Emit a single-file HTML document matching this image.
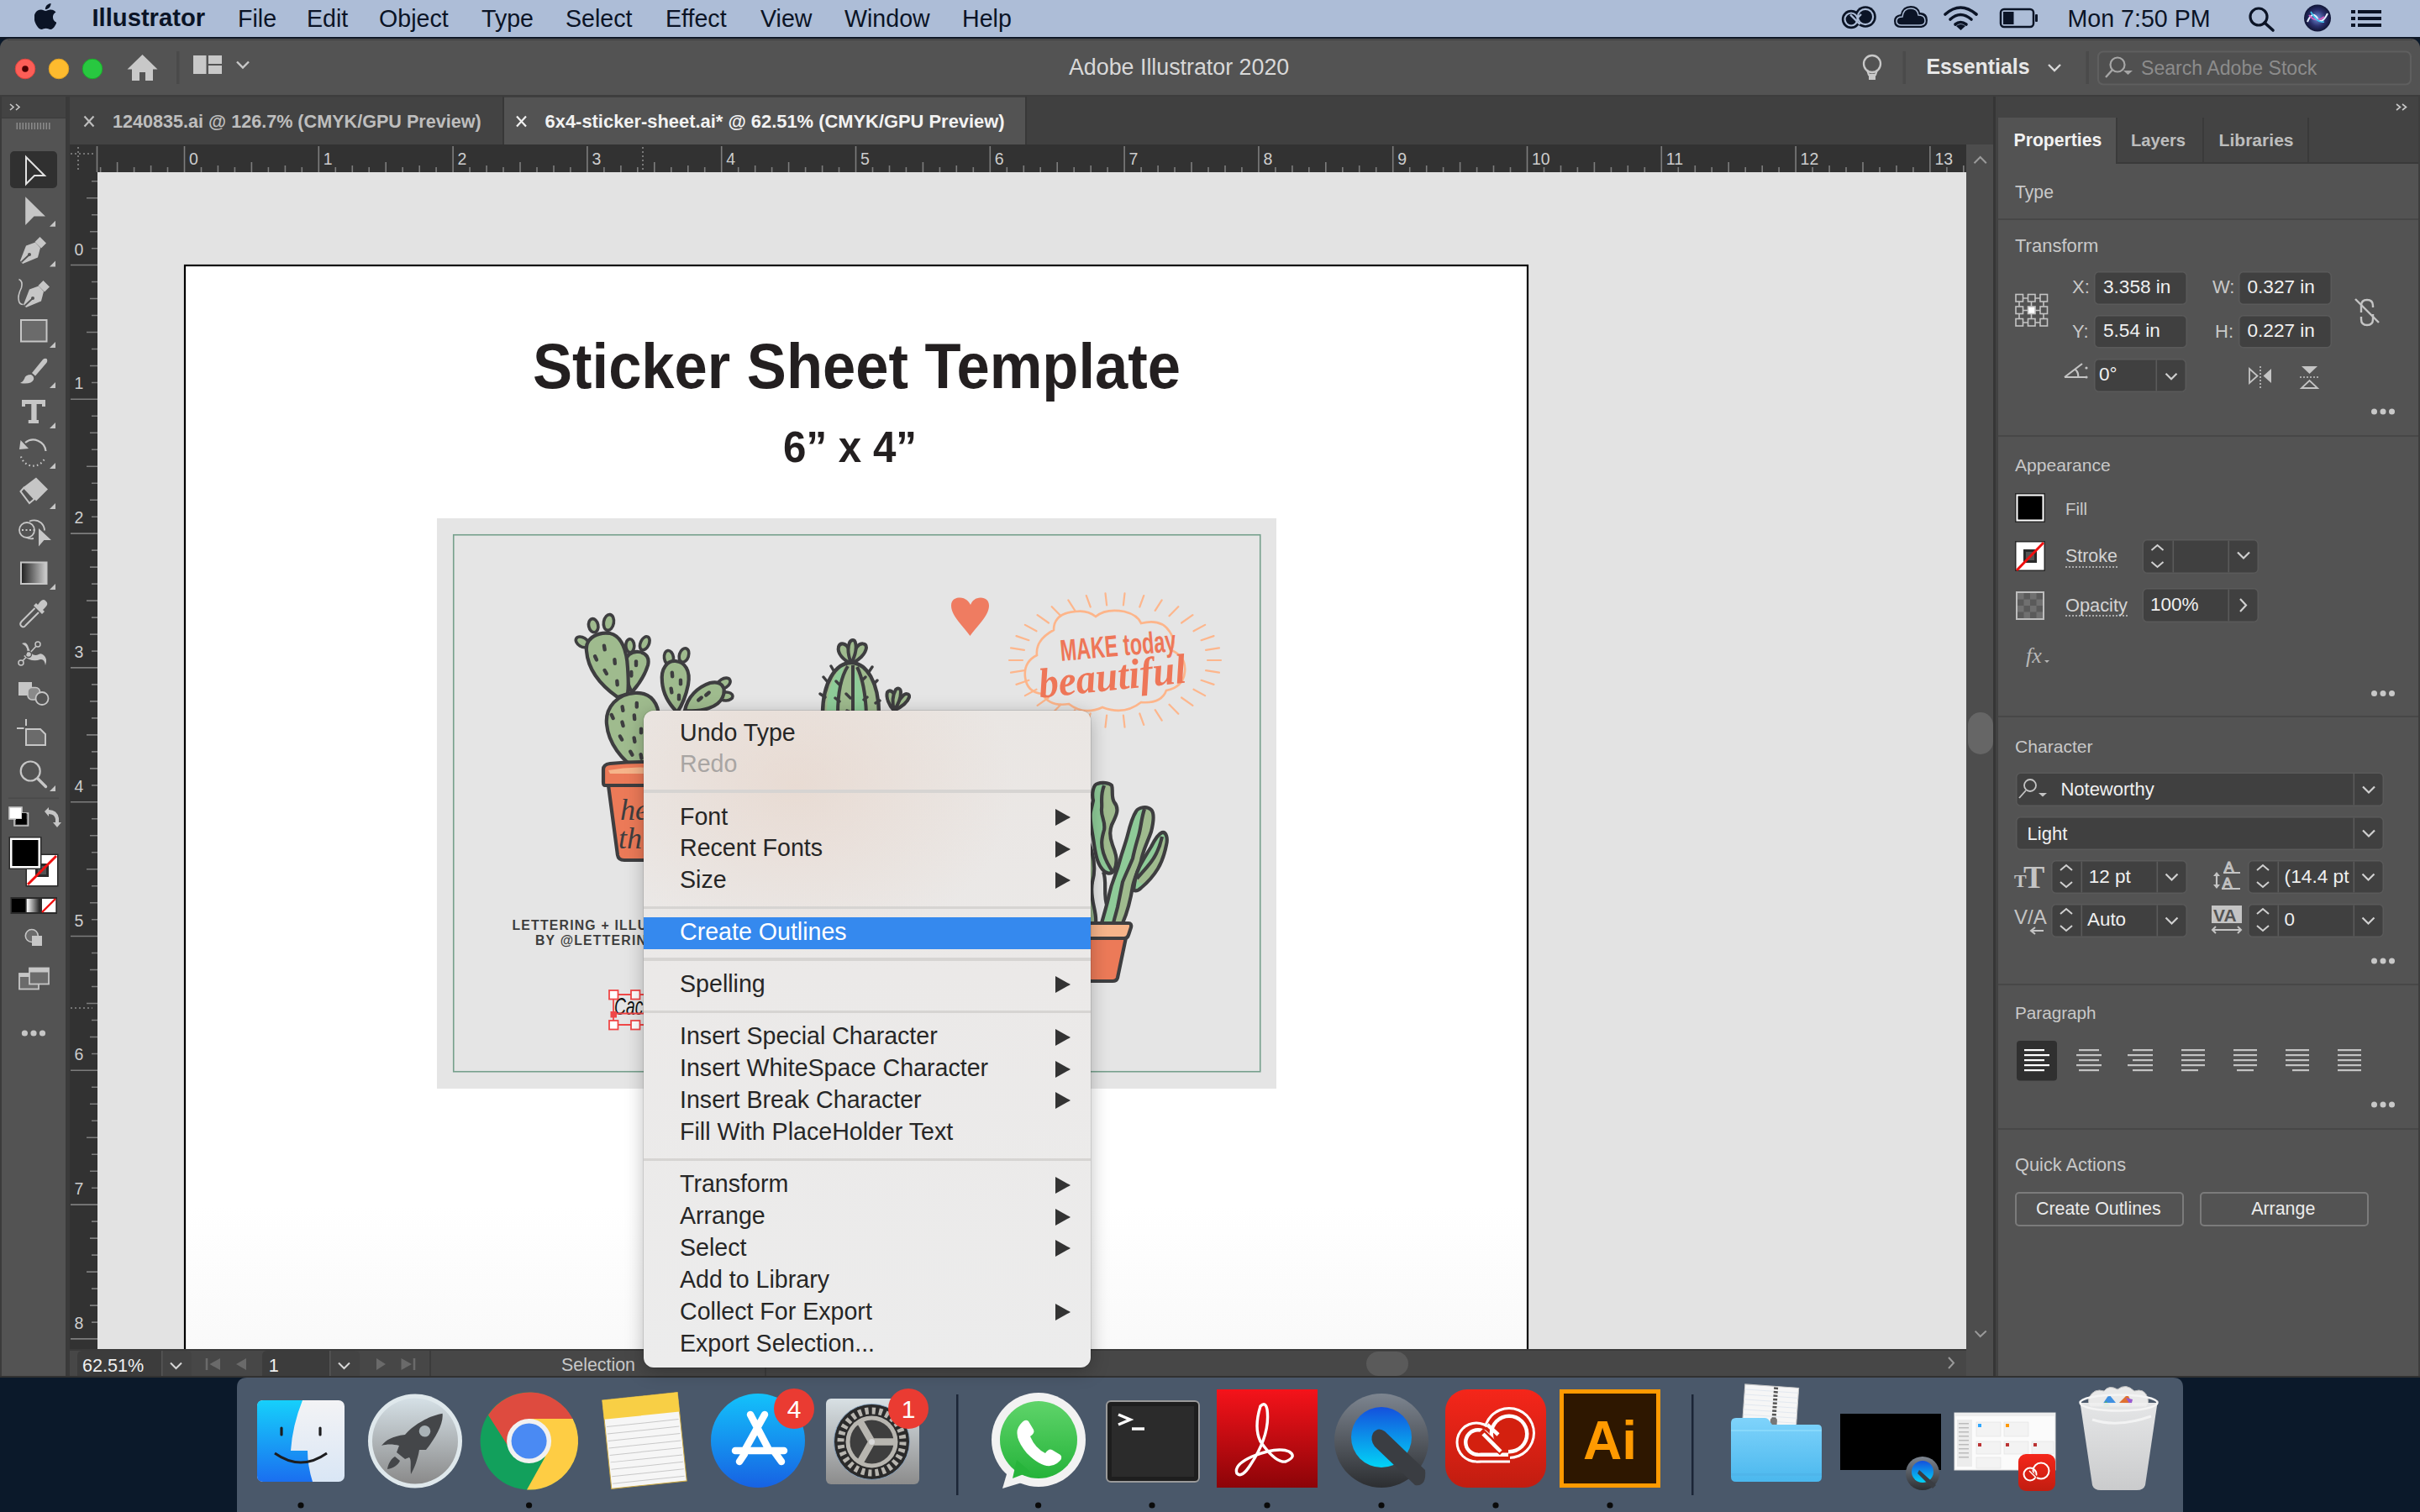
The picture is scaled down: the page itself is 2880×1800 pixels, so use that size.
<!DOCTYPE html>
<html><head><meta charset="utf-8"><title>Illustrator</title>
<style>*{margin:0;padding:0;box-sizing:border-box}
html,body{width:2880px;height:1800px;overflow:hidden}
body{position:relative;background:#0b192a;font-family:"Liberation Sans",sans-serif}
.a{position:absolute}
.t{position:absolute;white-space:nowrap;line-height:1}
</style></head>
<body>
<div class="a" style="left:0px;top:0px;width:2880px;height:45px;background:#adbdd7;"></div>
<div class="a" style="left:0px;top:44px;width:2880px;height:2.5px;background:#0e1726;"></div>
<svg class="a" style="left:41px;top:4px" width="26" height="31" viewBox="2.5 0 19 24" preserveAspectRatio="none"><path fill="#0b1426" d="M12.152 6.896c-.948 0-2.415-1.078-3.96-1.04-2.04.027-3.91 1.183-4.961 3.014-2.117 3.675-.546 9.103 1.519 12.09 1.013 1.454 2.208 3.09 3.792 3.039 1.52-.065 2.09-.987 3.935-.987 1.831 0 2.35.987 3.96.948 1.637-.026 2.676-1.48 3.676-2.948 1.156-1.688 1.636-3.325 1.662-3.415-.039-.013-3.182-1.221-3.22-4.857-.026-3.04 2.48-4.494 2.597-4.559-1.429-2.09-3.623-2.324-4.39-2.376-2-.156-3.675 1.09-4.61 1.09zM15.53 3.83c.843-1.012 1.4-2.427 1.245-3.83-1.207.052-2.662.805-3.532 1.818-.78.896-1.454 2.338-1.273 3.714 1.338.104 2.715-.688 3.559-1.701"/></svg>
<div class="t" style="left:109.5px;top:7.18px;font-size:29.2px;color:#0b1426;font-weight:bold;">Illustrator</div>
<div class="t" style="left:283px;top:7.69px;font-size:28.6px;color:#0b1426;">File</div>
<div class="t" style="left:365px;top:7.69px;font-size:28.6px;color:#0b1426;">Edit</div>
<div class="t" style="left:451px;top:7.69px;font-size:28.6px;color:#0b1426;">Object</div>
<div class="t" style="left:573px;top:7.69px;font-size:28.6px;color:#0b1426;">Type</div>
<div class="t" style="left:673px;top:7.69px;font-size:28.6px;color:#0b1426;">Select</div>
<div class="t" style="left:792px;top:7.69px;font-size:28.6px;color:#0b1426;">Effect</div>
<div class="t" style="left:905px;top:7.69px;font-size:28.6px;color:#0b1426;">View</div>
<div class="t" style="left:1005px;top:7.69px;font-size:28.6px;color:#0b1426;">Window</div>
<div class="t" style="left:1145px;top:7.69px;font-size:28.6px;color:#0b1426;">Help</div>
<div class="t" style="left:2460.5px;top:7.69px;font-size:28.6px;color:#0b1426;">Mon 7:50 PM</div>
<svg class="a" style="left:0;top:0" width="2880" height="45" viewBox="0 0 2880 45">
<g fill="#0b1426"><circle cx="2203" cy="23" r="11.2"/><circle cx="2220" cy="20" r="12.8"/></g>
<g fill="#adbdd7"><circle cx="2203" cy="23" r="8.6"/><circle cx="2220" cy="20" r="10.2"/></g>
<g fill="#0b1426"><circle cx="2203" cy="23" r="6.4"/><circle cx="2220" cy="20" r="8"/></g>
<path d="M2202 17.5 L2213.5 29" stroke="#adbdd7" stroke-width="2.4"/><path d="M2211 21 L2215 17" stroke="#adbdd7" stroke-width="2.2"/>
<path fill="#0b1426" d="M2262 33 q-8 0 -8 -8 q0 -7 8 -8 q2 -10 12 -10 q9 0 11 8 q9 0 9 9 q0 9 -9 9z"/>
<path fill="none" stroke="#adbdd7" stroke-width="1.5" d="M2263 30 q-6 0 -6 -5 q0 -5 7 -5 q1 -10 10 -10 q8 0 9 8 q8 0 8 7 q0 5 -7 5z"/>
<g fill="none" stroke="#0b1426" stroke-width="3.6" stroke-linecap="round">
<path d="M2315 17 q18 -16 37 0"/><path d="M2321 23 q12 -11 25 0"/><path d="M2327 29 q6 -5 13 0"/>
</g>
<path fill="#0b1426" d="M2328 31 l5.5 5 l5.5 -5 q-5.5 -4 -11 0z"/>
<rect x="2381" y="11" width="39" height="21" rx="4" fill="none" stroke="#0b1426" stroke-width="2.5"/>
<rect x="2384" y="14" width="12.5" height="15" fill="#0b1426"/>
<rect x="2422" y="17" width="3" height="9" rx="1" fill="#0b1426"/>
<circle cx="2688" cy="20" r="10" fill="none" stroke="#0b1426" stroke-width="3.2"/>
<path d="M2695 27 l10 9" stroke="#0b1426" stroke-width="3.6" stroke-linecap="round"/>
<defs><radialGradient id="siri" cx="50%" cy="50%" r="50%"><stop offset="0" stop-color="#6b8bd6"/><stop offset="0.6" stop-color="#2a2f6b"/><stop offset="1" stop-color="#101535"/></radialGradient></defs>
<circle cx="2758" cy="21.5" r="16" fill="url(#siri)"/>
<path d="M2746 26 q6 -14 12 -4 q5 8 12 -6" stroke="#e6f0ff" stroke-width="2" fill="none"/>
<path d="M2748 18 q8 10 18 2" stroke="#d060c0" stroke-width="2" fill="none"/>
<path d="M2750 14 q8 14 16 12" stroke="#40c8f0" stroke-width="1.6" fill="none"/>
<g fill="#0b1426"><rect x="2798" y="12" width="5" height="4"/><rect x="2806" y="12" width="28" height="4"/>
<rect x="2798" y="20" width="5" height="4"/><rect x="2806" y="20" width="28" height="4"/>
<rect x="2798" y="28" width="5" height="4"/><rect x="2806" y="28" width="28" height="4"/></g>
</svg>
<div class="a" style="left:0;top:46px;width:2880px;height:1593px;background:#535353;border-radius:11px 11px 0 0"></div>
<svg class="a" style="left:0;top:46px" width="2880" height="68" viewBox="0 46 2880 68">
<circle cx="30" cy="82" r="11.8" fill="#fd5e57" stroke="#e0443e" stroke-width="1"/>
<circle cx="30" cy="82" r="3.8" fill="#4d0000"/>
<circle cx="70" cy="82" r="11.8" fill="#febb2e" stroke="#dfa023" stroke-width="1"/>
<circle cx="110" cy="82" r="11.8" fill="#28c840" stroke="#1aab29" stroke-width="1"/>
<path fill="#c8c8c8" d="M151.5 82.5 L169.5 65 L187.5 82.5 L182 82.5 L182 96 L173 96 L173 86 L166 86 L166 96 L157 96 L157 82.5z"/>
<rect x="210" y="61" width="3.5" height="39" fill="#4a4a4a"/>
<rect x="230" y="66" width="15.5" height="22" fill="#c8c8c8"/>
<rect x="248" y="66" width="16" height="10" fill="#c8c8c8"/>
<rect x="248" y="78" width="16" height="10" fill="#c8c8c8"/>
<path d="M282 73.5 l7 7 l7 -7" fill="none" stroke="#c8c8c8" stroke-width="2.4"/>
<circle cx="2228" cy="76" r="10" fill="none" stroke="#c8c8c8" stroke-width="2.3"/>
<path d="M2222 83 l2 6 h8 l2 -6" fill="none" stroke="#c8c8c8" stroke-width="2.3"/>
<rect x="2224" y="89" width="8" height="6" fill="#c8c8c8"/>
<rect x="2264.5" y="61" width="3.5" height="39" fill="#4a4a4a"/>
<path d="M2438 77 l7 7 l7 -7" fill="none" stroke="#d8d8d8" stroke-width="2.4"/>
<rect x="2482.5" y="61" width="3.5" height="39" fill="#4a4a4a"/>
<rect x="2497" y="61.5" width="372" height="39" rx="6" fill="#505050" stroke="#5f5f5f" stroke-width="2.2"/>
<circle cx="2520" cy="77" r="8.5" fill="none" stroke="#a6a6a6" stroke-width="2.2"/>
<path d="M2514 83 l-8 9" stroke="#a6a6a6" stroke-width="2.4"/>
<path d="M2527 84 h11 l-5.5 5z" fill="#a6a6a6"/>
</svg>
<div class="a" style="left:9px;top:46.5px;width:2862px;height:1.5px;background:#3e3e3e;"></div>
<div class="t" style="left:1272px;top:67.02px;font-size:26.8px;color:#d8d8d8;">Adobe Illustrator 2020</div>
<div class="t" style="left:2292.4px;top:66.63px;font-size:24.9px;color:#e8e8e8;font-weight:bold;">Essentials</div>
<div class="t" style="left:2548px;top:69.66px;font-size:23.1px;color:#8c8c8c;">Search Adobe Stock</div>
<div class="a" style="left:0px;top:113px;width:2880px;height:2px;background:#3d3d3d;"></div>
<div class="a" style="left:0px;top:115px;width:80px;height:25px;background:#434343;"></div>
<div class="a" style="left:0px;top:140px;width:80px;height:1px;background:#3a3a3a;"></div>
<svg class="a" style="left:0;top:115px" width="80" height="50" viewBox="0 115 80 50"><path d="M12 124 l4 3.5 l-4 3.5 M19 124 l4 3.5 l-4 3.5" fill="none" stroke="#c8c8c8" stroke-width="1.6"/><rect x="19.5" y="146" width="1.6" height="8" fill="#8a8a8a"/><rect x="23.0" y="146" width="1.6" height="8" fill="#8a8a8a"/><rect x="26.5" y="146" width="1.6" height="8" fill="#8a8a8a"/><rect x="30.0" y="146" width="1.6" height="8" fill="#8a8a8a"/><rect x="33.5" y="146" width="1.6" height="8" fill="#8a8a8a"/><rect x="37.0" y="146" width="1.6" height="8" fill="#8a8a8a"/><rect x="40.5" y="146" width="1.6" height="8" fill="#8a8a8a"/><rect x="44.0" y="146" width="1.6" height="8" fill="#8a8a8a"/><rect x="47.5" y="146" width="1.6" height="8" fill="#8a8a8a"/><rect x="51.0" y="146" width="1.6" height="8" fill="#8a8a8a"/><rect x="54.5" y="146" width="1.6" height="8" fill="#8a8a8a"/><rect x="58.0" y="146" width="1.6" height="8" fill="#8a8a8a"/></svg>
<div class="a" style="left:0px;top:115px;width:2px;height:1524px;background:#3b3b3b;"></div>
<div class="a" style="left:78px;top:115px;width:5px;height:1524px;background:#3a3a3a;"></div>
<div class="a" style="left:83px;top:115px;width:2290px;height:57px;background:#404040;"></div>
<div class="a" style="left:83px;top:116px;width:515px;height:56px;background:#434343;"></div>
<div class="a" style="left:598px;top:115px;width:2px;height:57px;background:#383838;"></div>
<div class="a" style="left:600px;top:116px;width:620px;height:56px;background:#535353;"></div>
<div class="a" style="left:1220px;top:115px;width:2px;height:57px;background:#383838;"></div>
<svg class="a" style="left:83px;top:115px" width="600" height="57" viewBox="83 115 600 57">
<path d="M100.5 138.5 l11 12 M111.5 138.5 l-11 12" stroke="#bdbdbd" stroke-width="2.2"/>
<path d="M615 138.5 l11 12 M626 138.5 l-11 12" stroke="#f0f0f0" stroke-width="2.2"/>
</svg>
<div class="t" style="left:134px;top:133.94px;font-size:21.6px;color:#bebebe;font-weight:bold;">1240835.ai @ 126.7% (CMYK/GPU Preview)</div>
<div class="t" style="left:648.6px;top:133.69px;font-size:21.9px;color:#f2f2f2;font-weight:bold;">6x4-sticker-sheet.ai* @ 62.51% (CMYK/GPU Preview)</div>
<div class="a" style="left:83px;top:172px;width:2257px;height:33px;background:#323232;"></div>
<div class="a" style="left:83px;top:205px;width:33px;height:1401px;background:#323232;"></div>
<svg class="a" style="left:0;top:0" width="2340" height="1606" viewBox="0 0 2340 1606">
<path d="M119.6 199V205M139.6 193V205M159.6 199V205M179.6 197V205M199.5 199V205M219.5 174V205M239.5 199V205M259.4 197V205M279.4 199V205M299.4 193V205M319.4 199V205M339.4 197V205M359.3 199V205M379.3 174V205M399.3 199V205M419.3 197V205M439.2 199V205M459.2 193V205M479.2 199V205M499.2 197V205M519.1 199V205M539.1 174V205M559.1 199V205M579.1 197V205M599.0 199V205M619.0 193V205M639.0 199V205M659.0 197V205M678.9 199V205M698.9 174V205M718.9 199V205M738.9 197V205M758.8 199V205M778.8 193V205M798.8 199V205M818.8 197V205M838.7 199V205M858.7 174V205M878.7 199V205M898.7 197V205M918.6 199V205M938.6 193V205M958.6 199V205M978.6 197V205M998.5 199V205M1018.5 174V205M1038.5 199V205M1058.5 197V205M1078.4 199V205M1098.4 193V205M1118.4 199V205M1138.3 197V205M1158.3 199V205M1178.3 174V205M1198.3 199V205M1218.3 197V205M1238.2 199V205M1258.2 193V205M1278.2 199V205M1298.2 197V205M1318.1 199V205M1338.1 174V205M1358.1 199V205M1378.1 197V205M1398.0 199V205M1418.0 193V205M1438.0 199V205M1458.0 197V205M1477.9 199V205M1497.9 174V205M1517.9 199V205M1537.9 197V205M1557.8 199V205M1577.8 193V205M1597.8 199V205M1617.7 197V205M1637.7 199V205M1657.7 174V205M1677.7 199V205M1697.7 197V205M1717.6 199V205M1737.6 193V205M1757.6 199V205M1777.5 197V205M1797.5 199V205M1817.5 174V205M1837.5 199V205M1857.5 197V205M1877.4 199V205M1897.4 193V205M1917.4 199V205M1937.3 197V205M1957.3 199V205M1977.3 174V205M1997.3 199V205M2017.3 197V205M2037.2 199V205M2057.2 193V205M2077.2 199V205M2097.2 197V205M2117.1 199V205M2137.1 174V205M2157.1 199V205M2177.1 197V205M2197.0 199V205M2217.0 193V205M2237.0 199V205M2257.0 197V205M2276.9 199V205M2296.9 174V205M2316.9 199V205M2336.8 197V205M115.5 174V205" stroke="#7d7d7d" stroke-width="1.6"/>
<path d="M109 215.7H116M103 235.7H116M109 255.7H116M107 275.7H116M109 295.7H116M84 315.5H116M109 335.5H116M107 355.5H116M109 375.5H116M103 395.5H116M109 415.5H116M107 435.5H116M109 455.5H116M84 475.3H116M109 495.3H116M107 515.3H116M109 535.3H116M103 555.3H116M109 575.3H116M107 595.3H116M109 615.3H116M84 635.1H116M109 655.1H116M107 675.1H116M109 695.1H116M103 715.1H116M109 735.1H116M107 755.1H116M109 775.1H116M84 794.9000000000001H116M109 814.9000000000001H116M107 834.9000000000001H116M109 854.9000000000001H116M103 874.9000000000001H116M109 894.9000000000001H116M107 914.9000000000001H116M109 934.9000000000001H116M84 954.7H116M109 974.7H116M107 994.7H116M109 1014.7H116M103 1034.7H116M109 1054.7H116M107 1074.7H116M109 1094.7H116M84 1114.5H116M109 1134.5H116M107 1154.5H116M109 1174.5H116M103 1194.5H116M109 1214.5H116M107 1234.5H116M109 1254.5H116M84 1274.3000000000002H116M109 1294.3000000000002H116M107 1314.3000000000002H116M109 1334.3000000000002H116M103 1354.3000000000002H116M109 1374.3000000000002H116M107 1394.3000000000002H116M109 1414.3000000000002H116M84 1434.1000000000001H116M109 1454.1000000000001H116M107 1474.1000000000001H116M109 1494.1000000000001H116M103 1514.1000000000001H116M109 1534.1000000000001H116M107 1554.1000000000001H116M109 1574.1000000000001H116M84 1593.9H116" stroke="#7d7d7d" stroke-width="1.6"/>
<g font-family="Liberation Sans"><text x="225.0" y="196" font-size="19.5" fill="#cdcdcd">0</text><text x="384.8" y="196" font-size="19.5" fill="#cdcdcd">1</text><text x="544.6" y="196" font-size="19.5" fill="#cdcdcd">2</text><text x="704.4" y="196" font-size="19.5" fill="#cdcdcd">3</text><text x="864.2" y="196" font-size="19.5" fill="#cdcdcd">4</text><text x="1024.0" y="196" font-size="19.5" fill="#cdcdcd">5</text><text x="1183.8" y="196" font-size="19.5" fill="#cdcdcd">6</text><text x="1343.6" y="196" font-size="19.5" fill="#cdcdcd">7</text><text x="1503.4" y="196" font-size="19.5" fill="#cdcdcd">8</text><text x="1663.2" y="196" font-size="19.5" fill="#cdcdcd">9</text><text x="1823.0" y="196" font-size="19.5" fill="#cdcdcd">10</text><text x="1982.8" y="196" font-size="19.5" fill="#cdcdcd">11</text><text x="2142.6" y="196" font-size="19.5" fill="#cdcdcd">12</text><text x="2302.4" y="196" font-size="19.5" fill="#cdcdcd">13</text><text x="88.5" y="303.5" font-size="19.5" fill="#cdcdcd">0</text><text x="88.5" y="463.3" font-size="19.5" fill="#cdcdcd">1</text><text x="88.5" y="623.1" font-size="19.5" fill="#cdcdcd">2</text><text x="88.5" y="782.9000000000001" font-size="19.5" fill="#cdcdcd">3</text><text x="88.5" y="942.7" font-size="19.5" fill="#cdcdcd">4</text><text x="88.5" y="1102.5" font-size="19.5" fill="#cdcdcd">5</text><text x="88.5" y="1262.3000000000002" font-size="19.5" fill="#cdcdcd">6</text><text x="88.5" y="1422.1000000000001" font-size="19.5" fill="#cdcdcd">7</text><text x="88.5" y="1581.9" font-size="19.5" fill="#cdcdcd">8</text></g>
<path d="M93 175V205 M84 183H114" stroke="#8a8a8a" stroke-width="1.6" stroke-dasharray="2 3"/>
<path d="M765 175V205" stroke="#8a8a8a" stroke-width="1.6" stroke-dasharray="2 3"/>
<path d="M84 1200H110" stroke="#8a8a8a" stroke-width="1.6" stroke-dasharray="2 3"/>
</svg>
<svg class="a" style="left:0;top:140px" width="80" height="1500" viewBox="0 140 80 1500">
<rect x="12" y="180" width="56" height="44" rx="5" fill="#303030"/>
<path d="M31 187 L53 209 L41 209 L31 219z" fill="none" stroke="#e2e2e2" stroke-width="2" stroke-linejoin="miter"/>
<path d="M30.2 234.3 L54 257.6 L40.5 257.6 L30.2 268z" fill="#c6c6c6"/><path d="M59 269.7 L66 262.7 L66 269.7z" fill="#c6c6c6"/>
<g fill="#c6c6c6"><path d="M24 310.5 L31 292.5 L42 288.5 L48 295 L45 306.5 L27 314z"/><path d="M41.5 288 L47.5 282 L55 289.5 L49 295.5z"/></g><path d="M25.5 312 L35 303" stroke="#535353" stroke-width="1.8"/><circle cx="35" cy="303" r="2" fill="#535353"/><path d="M59 317.6 L66 310.6 L66 317.6z" fill="#c6c6c6"/>
<g fill="#c6c6c6"><path d="M28 362.5 L35 344.5 L46 340.5 L52 347 L49 358.5 L31 366z"/><path d="M45.5 340 L51.5 334 L59 341.5 L53 347.5z"/></g><path d="M29.5 364 L39 355" stroke="#535353" stroke-width="1.8"/><circle cx="39" cy="355" r="2" fill="#535353"/><path d="M22.5 332.5 q5 2 3 10 q-5 10 -3 16 q1 4 5 4" fill="none" stroke="#c6c6c6" stroke-width="1.6"/>
<rect x="25" y="381" width="30.5" height="25.5" fill="#6b6b6b" stroke="#c6c6c6" stroke-width="2"/><path d="M59 414 L66 407 L66 414z" fill="#c6c6c6"/>
<path d="M55.5 427 q2 3 -1 6 L42 447.5 L38 444 L51 428 q2 -2 4.5 -1z" fill="#c6c6c6"/><path d="M37 446 q4 2 3 6 q-3 6 -16 4 q4 -2 5 -5 q1 -5 8 -5z" fill="#c6c6c6"/><path d="M59 462 L66 455 L66 462z" fill="#c6c6c6"/>
<path d="M26 476 H54 V484 H50 V481 H43.6 V500 H46 V504 H33.8 V500 H37.3 V481 H30 V484 H26z" fill="#c6c6c6"/><path d="M59 510 L66 503 L66 510z" fill="#c6c6c6"/>
<path d="M54.5 537 A15 15 0 0 0 30 527" fill="none" stroke="#c6c6c6" stroke-width="2.2"/><path d="M24.5 524 L34 534 L23 535z" fill="#c6c6c6"/><path d="M25 543.5 A15 15 0 0 0 53.5 545" fill="none" stroke="#c6c6c6" stroke-width="2.2" stroke-dasharray="1.6 3.2"/><path d="M59 558 L66 551 L66 558z" fill="#c6c6c6"/>
<path d="M28.5 579.5 L43 568.5 L57 582.5 L43 596.5z" fill="#c6c6c6"/><path d="M28.5 580.5 L24.5 585 L35 599 L41 594z" fill="none" stroke="#c6c6c6" stroke-width="2"/><path d="M59 606 L66 599 L66 606z" fill="#c6c6c6"/>
<circle cx="32" cy="631" r="9" fill="none" stroke="#c6c6c6" stroke-width="1.8"/><path d="M35 620.5 q8 -3 14 2 q4 4 4 9" fill="none" stroke="#c6c6c6" stroke-width="1.8"/><path d="M40 641 q-5 1 -8 -1" fill="none" stroke="#c6c6c6" stroke-width="1.8"/><path d="M26 631 H44" stroke="#c6c6c6" stroke-width="1.8" stroke-dasharray="2 2.5"/><path d="M46 629 L61 643 L52.4 643 L46 650.5z" fill="#c6c6c6"/>
<defs><linearGradient id="gr" x1="0" x2="1"><stop offset="0" stop-color="#1e1e1e"/><stop offset="1" stop-color="#d0d0d0"/></linearGradient><linearGradient id="gr2" x1="0" x2="1"><stop offset="0" stop-color="#ffffff"/><stop offset="1" stop-color="#222"/></linearGradient></defs>
<rect x="25" y="669.5" width="30.5" height="25.5" fill="url(#gr)" stroke="#c6c6c6" stroke-width="2"/><path d="M59 702 L66 695 L66 702z" fill="#c6c6c6"/>
<path d="M48 716 q4 -4 7 0 q3 3 -1 7 l-3 3 l2 2 l-3 3 l-10 -10 l3 -3 l2 2z" fill="#c6c6c6"/><path d="M41.5 724 L26 739.5 q-3 3 -1 5.5 q3 3 5.5 -0.5 L46 729" fill="none" stroke="#c6c6c6" stroke-width="2"/>
<path d="M26 766 q6 -3 8 5 q4 12 12 8 q3 -2 6 1 q5 4 2 12 q-1 -8 -6 -7 q-10 4 -20 -4 q6 -2 4 -9 q-2 -4 -6 -6z" fill="#c6c6c6"/><path d="M25 789 L45 767" stroke="#c6c6c6" stroke-width="1.6"/><circle cx="25" cy="789" r="3" fill="#535353" stroke="#c6c6c6" stroke-width="1.5"/><circle cx="45" cy="767" r="3" fill="#535353" stroke="#c6c6c6" stroke-width="1.5"/><circle cx="34" cy="779" r="3.5" fill="none" stroke="#535353" stroke-width="1.4"/>
<rect x="22" y="812" width="16" height="16" fill="#c6c6c6"/><rect x="33" y="818.5" width="14.5" height="14.5" rx="5" fill="#8a8a8a" stroke="#c6c6c6" stroke-width="1.6"/><circle cx="50" cy="831.5" r="7.5" fill="#535353" stroke="#c6c6c6" stroke-width="1.8"/>
<path d="M20 867 H28.5 M31 856 V864" stroke="#c6c6c6" stroke-width="2"/><path d="M31 868 H48 L54 874 V887 H31z" fill="#6b6b6b" stroke="#c6c6c6" stroke-width="2"/>
<circle cx="36.2" cy="918" r="11.5" fill="none" stroke="#c6c6c6" stroke-width="2.2"/><path d="M45 927 L54.5 936.5" stroke="#c6c6c6" stroke-width="3.4" stroke-linecap="round"/><path d="M59 942 L66 935 L66 942z" fill="#c6c6c6"/>
<rect x="10" y="949.5" width="60" height="1.2" fill="#484848"/>
<rect x="11" y="961" width="15" height="14" fill="#fff" stroke="#c6c6c6" stroke-width="1.6"/><path d="M26 968 H33.5 V983 H17 V975" fill="none" stroke="#c6c6c6" stroke-width="1.6"/><rect x="19" y="975" width="12.5" height="6.5" fill="#000"/><rect x="26" y="968" width="5.5" height="13" fill="#000"/>
<path d="M53 966 L58 961 L58 964 q10 0 12 10 L70 979 L73 979 L68 985 L63 979 L66 979 L66 975 q-1 -6 -8 -6 L58 972z" fill="#c6c6c6"/>
<rect x="30.5" y="1016.5" width="39" height="39" fill="#2b2b2b"/><rect x="32" y="1018" width="36" height="36" fill="#fff"/><rect x="42" y="1028" width="16" height="16" fill="#2b2b2b"/><rect x="45" y="1031" width="10" height="10" fill="#535353"/><path d="M33 1053 L67 1019" stroke="#f01010" stroke-width="3"/>
<rect x="10.5" y="996" width="39" height="39" fill="#2b2b2b"/><rect x="12" y="997.5" width="36" height="36" fill="#fff"/><rect x="14.5" y="1000" width="31" height="31" fill="#000"/>
<rect x="12.5" y="1068" width="55.5" height="20" fill="#2b2b2b"/><rect x="14" y="1070" width="16" height="16" fill="#000"/><rect x="31.7" y="1070" width="15.6" height="16" fill="url(#gr2)"/><rect x="50" y="1070" width="16.3" height="16" fill="#fff"/><path d="M50 1086 L66 1070" stroke="#f01010" stroke-width="2.4"/>
<circle cx="37.8" cy="1114" r="7.5" fill="#6b6b6b" stroke="#c6c6c6" stroke-width="1.6"/><rect x="38" y="1114" width="12" height="12" fill="#c6c6c6"/>
<rect x="23" y="1159" width="23" height="18.5" fill="#6b6b6b" stroke="#c6c6c6" stroke-width="1.8"/><rect x="23" y="1159" width="23" height="4" fill="#c6c6c6"/><rect x="35" y="1152.5" width="23" height="19" fill="#6b6b6b" stroke="#c6c6c6" stroke-width="1.8"/><rect x="35" y="1152.5" width="23" height="5" fill="#c6c6c6"/>
<g fill="#c6c6c6"><circle cx="29.4" cy="1230" r="3.6"/><circle cx="40" cy="1230" r="3.6"/><circle cx="50.5" cy="1230" r="3.6"/></g>
</svg>
<div class="a" style="left:116px;top:205px;width:2224px;height:1401px;background:#e3e3e3;"></div>
<svg class="a" style="left:116px;top:205px" width="2224" height="1401" viewBox="116 205 2224 1401" font-family="Liberation Sans">
<defs><linearGradient id="abg" x1="0" y1="0" x2="0" y2="1"><stop offset="0" stop-color="#fff"/><stop offset="0.8" stop-color="#fff"/><stop offset="0.93" stop-color="#f9f9f9"/><stop offset="1" stop-color="#f7f7f7"/></linearGradient></defs>
<rect x="220" y="316" width="1598" height="1400" fill="url(#abg)" stroke="#000" stroke-width="2.2"/>
<text x="634" y="462" font-size="76" font-weight="bold" fill="#231f20" textLength="771" lengthAdjust="spacingAndGlyphs">Sticker Sheet Template</text>
<text x="932" y="550" font-size="51" font-weight="bold" fill="#231f20" textLength="159" lengthAdjust="spacingAndGlyphs">6” x 4”</text>
<rect x="520" y="617" width="999" height="679" fill="#e5e5e5"/>
<rect x="539.75" y="636.75" width="960" height="639" fill="none" stroke="#76a08c" stroke-width="1.6"/>
<path fill="#ef7c61" d="M1154.5 757 C1146 745 1132 733 1132 721 C1132 713 1138 711.5 1142.5 711.5 C1149 711.5 1153 716 1155 720 C1157 715 1161 711.5 1167 711.5 C1173 711.5 1177 715 1177 721 C1177 733 1163 745 1154.5 757z"/>
<path d="M1437.0 786.0L1453.0 786.0M1435.1 798.1L1450.9 800.7M1429.6 809.8L1444.5 814.9M1420.5 820.7L1434.1 828.1M1406.1 830.5L1419.4 839.9M1391.5 838.7L1402.3 849.8M1374.7 845.1L1382.7 857.6M1356.3 849.5L1361.2 862.9M1336.9 851.7L1338.5 865.7M1317.1 851.7L1315.5 865.7M1297.7 849.5L1292.8 862.9M1279.3 845.1L1271.3 857.6M1262.5 838.7L1251.7 849.8M1247.9 830.5L1234.6 839.9M1233.5 820.7L1219.9 828.1M1224.4 809.8L1209.5 814.9M1218.9 798.1L1203.1 800.7M1217.0 786.0L1201.0 786.0M1218.9 773.9L1203.1 771.3M1224.4 762.2L1209.5 757.1M1233.5 751.3L1219.9 743.9M1247.9 741.5L1234.6 732.1M1262.5 733.3L1251.7 722.2M1279.3 726.9L1271.3 714.4M1297.7 722.5L1292.8 709.1M1317.1 720.3L1315.5 706.3M1336.9 720.3L1338.5 706.3M1356.3 722.5L1361.2 709.1M1374.7 726.9L1382.7 714.4M1391.5 733.3L1402.3 722.2M1406.1 741.5L1419.4 732.1M1420.5 751.3L1434.1 743.9M1429.6 762.2L1444.5 757.1M1435.1 773.9L1450.9 771.3" stroke="#fdb68c" stroke-width="2.2" stroke-linecap="round"/>
<path fill="none" stroke="#fdb58a" stroke-width="2.6" d="M1254 750 q0 -20 26 -22 q14 -2 24 6 q12 -10 34 -6 q16 4 20 14 q24 -6 34 10 q8 12 2 22 q18 8 16 26 q-2 18 -22 22 q-6 16 -30 14 q-20 16 -46 6 q-22 10 -40 -4 q-22 4 -32 -12 q-18 -2 -20 -20 q-2 -18 14 -26 q-2 -18 20 -30z"/>
<text x="1261" y="781" font-size="36" fill="#ee7658" font-weight="bold" textLength="138" lengthAdjust="spacingAndGlyphs" transform="rotate(-5 1330 765)">MAKE today</text>
<text x="1236" y="822" font-size="50" font-style="italic" font-weight="bold" fill="#ee7658" textLength="176" lengthAdjust="spacingAndGlyphs" font-family="Liberation Serif" transform="rotate(-6 1320 810)">beautiful</text>
<ellipse cx="706.2" cy="744.7" rx="5.6" ry="8.2" transform="rotate(-12 706.2 744.7)" fill="#9fbb8e" stroke="#3e3e40" stroke-width="3.6"/>
<ellipse cx="724.4" cy="741" rx="6" ry="9.5" transform="rotate(10 724.4 741)" fill="#9fbb8e" stroke="#3e3e40" stroke-width="3.6"/>
<ellipse cx="693" cy="764.4" rx="5.4" ry="8.4" transform="rotate(-58 693 764.4)" fill="#9fbb8e" stroke="#3e3e40" stroke-width="3.6"/>
<ellipse cx="749.8" cy="768.7" rx="5" ry="8" transform="rotate(-2 749.8 768.7)" fill="#9fbb8e" stroke="#3e3e40" stroke-width="3.6"/>
<ellipse cx="767.3" cy="765.8" rx="5" ry="8.5" transform="rotate(25 767.3 765.8)" fill="#9fbb8e" stroke="#3e3e40" stroke-width="3.6"/>
<ellipse cx="796" cy="783" rx="5.5" ry="8.5" transform="rotate(-8 796 783)" fill="#9fbb8e" stroke="#3e3e40" stroke-width="3.6"/>
<ellipse cx="814" cy="780" rx="5.5" ry="8.5" transform="rotate(18 814 780)" fill="#9fbb8e" stroke="#3e3e40" stroke-width="3.6"/>
<ellipse cx="861.3" cy="813.6" rx="5.5" ry="8.5" transform="rotate(58 861.3 813.6)" fill="#9fbb8e" stroke="#3e3e40" stroke-width="3.6"/>
<ellipse cx="864" cy="829" rx="5" ry="8" transform="rotate(88 864 829)" fill="#9fbb8e" stroke="#3e3e40" stroke-width="3.6"/>
<path d="M745 790 C744 780 752 775 760 776 C770 777 773 784 771 792 C768 802 760 815 752 824 C748 818 745 805 745 790 Z" fill="#9fbb8e" stroke="#3e3e40" stroke-width="4.2" stroke-linejoin="round"/>
<path d="M788 812 C786 795 795 786 804 787 C815 788 822 798 819 815 C816 830 810 842 806 848 C796 838 789 825 788 812 Z" fill="#9fbb8e" stroke="#3e3e40" stroke-width="4.2" stroke-linejoin="round"/>
<path d="M815 846 C818 830 830 818 845 813 C858 810 865 818 860 830 C855 842 835 848 815 846 Z" fill="#9fbb8e" stroke="#3e3e40" stroke-width="4.2" stroke-linejoin="round"/>
<path d="M698 775 C696 758 714 752 726 754 C740 757 746 775 747 795 C748 810 748 820 747 826 L735 830 C718 818 700 800 698 775 Z" fill="#9fbb8e" stroke="#3e3e40" stroke-width="4.2" stroke-linejoin="round"/>
<path d="M722 862 C720 842 735 826 756 825 C775 824 785 838 784 858 C782 880 772 905 760 918 C740 905 724 885 722 862 Z" fill="#9fbb8e" stroke="#3e3e40" stroke-width="4.2" stroke-linejoin="round"/>
<g fill="#3e3e40"><rect x="717.0999999999999" y="766.5" width="4.4" height="9" rx="2.2" transform="rotate(-10 719.3 771)"/><rect x="706.8" y="778.8" width="4.4" height="9" rx="2.2" transform="rotate(-25 709 783.3)"/><rect x="729.4" y="783.1" width="4.4" height="9" rx="2.2" transform="rotate(-5 731.6 787.6)"/><rect x="718.5" y="795.5" width="4.4" height="9" rx="2.2" transform="rotate(-30 720.7 800)"/><rect x="732.3" y="808.5" width="4.4" height="9" rx="2.2" transform="rotate(-5 734.5 813)"/><rect x="754.8" y="785.3" width="4.4" height="9" rx="2.2" transform="rotate(0 757 789.8)"/><rect x="749.0999999999999" y="797.7" width="4.4" height="9" rx="2.2" transform="rotate(0 751.3 802.2)"/><rect x="755.5999999999999" y="834.8" width="4.4" height="9" rx="2.2" transform="rotate(0 757.8 839.3)"/><rect x="738.8" y="839.1" width="4.4" height="9" rx="2.2" transform="rotate(-10 741 843.6)"/><rect x="726.5" y="848.5" width="4.4" height="9" rx="2.2" transform="rotate(-25 728.7 853)"/><rect x="738.8" y="857.3" width="4.4" height="9" rx="2.2" transform="rotate(-15 741 861.8)"/><rect x="752.8" y="849.3" width="4.4" height="9" rx="2.2" transform="rotate(-5 755 853.8)"/><rect x="760.8" y="865.5" width="4.4" height="9" rx="2.2" transform="rotate(0 763 870)"/><rect x="736.8" y="874.0" width="4.4" height="9" rx="2.2" transform="rotate(-30 739 878.5)"/><rect x="752.8" y="876.2" width="4.4" height="9" rx="2.2" transform="rotate(-10 755 880.7)"/><rect x="749.0999999999999" y="892.2" width="4.4" height="9" rx="2.2" transform="rotate(-30 751.3 896.7)"/><rect x="760.8" y="895.9" width="4.4" height="9" rx="2.2" transform="rotate(-10 763 900.4)"/><rect x="797.8" y="798.5" width="4.4" height="9" rx="2.2" transform="rotate(-5 800 803)"/><rect x="807.8" y="807.5" width="4.4" height="9" rx="2.2" transform="rotate(0 810 812)"/><rect x="796.8" y="817.5" width="4.4" height="9" rx="2.2" transform="rotate(-10 799 822)"/><rect x="805.8" y="825.5" width="4.4" height="9" rx="2.2" transform="rotate(0 808 830)"/><rect x="830.8" y="827.5" width="4.4" height="9" rx="2.2" transform="rotate(50 833 832)"/><rect x="839.8" y="821.5" width="4.4" height="9" rx="2.2" transform="rotate(50 842 826)"/></g>
<path d="M724 935 L735 1018 q1 6 8 6 L790 1024 L800 935z" fill="#ec7a58" stroke="#3e3e40" stroke-width="4.2"/>
<path d="M718 916 q0 -6 8 -7 q40 -4 76 0 V935 H720 q-2 0 -2 -4z" fill="#ec7a58" stroke="#3e3e40" stroke-width="4.2"/>
<path d="M724 917 q30 -6 60 -2 q-4 4 -8 6 H726z" fill="#f6b48a" stroke="none"/>
<text x="738" y="976" font-family="Liberation Serif" font-style="italic" font-size="36" fill="#3e3e40">he</text><text x="736" y="1010" font-family="Liberation Serif" font-style="italic" font-size="36" fill="#3e3e40">th</text>
<g fill="#9fbb8e" stroke="#3e3e40" stroke-width="4" stroke-linejoin="round"><path d="M1013 790 C1004 786 996 778 998 770 C1000 764 1007 766 1010 772 C1012 777 1013 784 1013 790z"/><path d="M1013 790 C1022 786 1030 779 1031 771 C1031 765 1024 765 1020 770 C1016 775 1014 783 1013 790z"/><path d="M1013 790 C1010 782 1008 772 1011 765 C1013 761 1017 761 1018 765 C1020 772 1017 782 1013 790z"/></g>
<path d="M979 850 C979 812 995 789 1013 789 C1031 789 1046 812 1046 850z" fill="#9fbb8e"/>
<path d="M984 850 C984 818 994 800 1004 793 C1000 808 997 826 997 850z" fill="#8ecb98"/><path d="M1015 850 L1015 792 C1023 806 1028 826 1029 850z" fill="#8ecb98"/>
<path d="M979 850 C979 812 995 789 1013 789 C1031 789 1046 812 1046 850" fill="none" stroke="#3e3e40" stroke-width="4.4"/>
<path d="M997 850 C997 822 1002 804 1009 793 M1015 792 V850 M1031 850 C1030 824 1026 806 1020 794" fill="none" stroke="#3e3e40" stroke-width="4"/>
<path d="M989 793 l4 7 M980 806 l5 6 M976 826 l6 4 M995 811 l4 4 M994 831 l5 4 M1007 826 l5 5 M1008 846 l5 2 M1038 794 l-4 6 M1044 810 l-4 4 M1047 834 l-5 3 M1030 806 l-4 4 M1032 830 l-4 3" stroke="#3e3e40" stroke-width="3.4" stroke-linecap="round"/>
<g fill="#9fbb8e" stroke="#3e3e40" stroke-width="4" stroke-linejoin="round"><path d="M1064 846 C1058 840 1054 830 1056 824 C1059 820 1064 824 1066 830 C1067 836 1066 842 1064 846z"/><path d="M1064 846 C1072 842 1080 836 1082 830 C1083 825 1077 825 1074 829 C1069 834 1066 840 1064 846z"/><path d="M1064 846 C1062 838 1062 828 1066 821 C1069 818 1072 820 1072 824 C1072 832 1068 840 1064 846z"/></g>
<path d="M1290 990 C1300 1010 1306 1030 1300 1050 C1296 1070 1306 1085 1304 1099 L1290 1099z" fill="#93b28a" stroke="#3e3e40" stroke-width="4.2" stroke-linejoin="round"/>
<path d="M1313 1038 C1318 1050 1312 1065 1318 1080 C1320 1090 1316 1095 1316 1099" fill="none" stroke="#3e3e40" stroke-width="4.2" stroke-linejoin="round"/>
<path d="M1301 953 C1299 945 1301 934 1306 933 C1312 931 1320 932 1323 935 C1325 940 1322 948 1326 955 C1333 963 1328 972 1323 982 C1320 990 1321 998 1324 1006 C1328 1016 1331 1025 1326 1036 C1322 1042 1316 1040 1312 1035 C1306 1028 1304 1018 1302 1005 C1300 990 1296 975 1298 966z" fill="#8ecb98"/>
<path d="M1314 935 C1309 948 1312 955 1311 963 C1310 972 1316 978 1314 988 C1311 998 1310 1005 1313 1015 C1316 1025 1320 1032 1325 1039 C1328 1030 1330 1022 1326 1010 C1321 998 1322 990 1326 980 C1331 970 1330 962 1324 952 C1322 946 1322 940 1322 935z" fill="#9fbb8e"/>
<path d="M1301 953 C1299 945 1301 934 1306 933 C1312 931 1320 932 1323 935 C1325 940 1322 948 1326 955 C1333 963 1328 972 1323 982 C1320 990 1321 998 1324 1006 C1328 1016 1331 1025 1326 1036 C1322 1042 1316 1040 1312 1035 C1306 1028 1304 1018 1302 1005 C1300 990 1296 975 1298 966z" fill="none" stroke="#3e3e40" stroke-width="4.2" stroke-linejoin="round"/>
<path d="M1314 935 C1309 948 1312 955 1311 963 C1310 972 1316 978 1314 988 C1311 998 1310 1005 1313 1015 C1316 1025 1320 1032 1325 1039" fill="none" stroke="#3e3e40" stroke-width="4.2" stroke-linejoin="round"/>
<path d="M1311 1099 C1314 1088 1318 1075 1320 1065 C1322 1056 1324 1050 1326 1045 C1330 1035 1332 1028 1334 1020 C1337 1010 1340 1002 1342 994 C1345 982 1348 972 1352 966 C1355 961 1365 959 1370 964 C1374 968 1373 978 1370 990 C1366 1002 1360 1012 1358 1025 C1355 1035 1350 1045 1348 1055 C1346 1068 1342 1085 1336 1099z" fill="#8ecb98"/>
<path d="M1362 963 C1358 975 1358 985 1355 995 C1352 1005 1350 1012 1348 1022 C1344 1032 1340 1040 1336 1050 C1334 1060 1332 1070 1330 1080 C1328 1088 1326 1094 1326 1099 L1336 1099 C1342 1085 1346 1068 1348 1055 C1350 1045 1355 1035 1358 1025 C1360 1012 1366 1002 1370 990 C1373 978 1374 968 1370 964z" fill="#9fbb8e"/>
<path d="M1311 1099 C1314 1088 1318 1075 1320 1065 C1322 1056 1324 1050 1326 1045 C1330 1035 1332 1028 1334 1020 C1337 1010 1340 1002 1342 994 C1345 982 1348 972 1352 966 C1355 961 1365 959 1370 964 C1374 968 1373 978 1370 990 C1366 1002 1360 1012 1358 1025 C1355 1035 1350 1045 1348 1055 C1346 1068 1342 1085 1336 1099z" fill="none" stroke="#3e3e40" stroke-width="4.2" stroke-linejoin="round"/>
<path d="M1362 963 C1358 975 1358 985 1355 995 C1352 1005 1350 1012 1348 1022 C1344 1032 1340 1040 1336 1050 C1334 1060 1332 1070 1330 1080 C1328 1088 1326 1094 1325 1099" fill="none" stroke="#3e3e40" stroke-width="4.2" stroke-linejoin="round"/>
<path d="M1349 1060 C1350 1050 1352 1040 1356 1032 C1360 1024 1365 1016 1370 1008 C1374 1000 1378 993 1383 991 C1388 990 1390 998 1388 1006 C1386 1016 1384 1024 1378 1034 C1372 1044 1364 1052 1358 1057 C1355 1060 1352 1061 1349 1060z" fill="#8ecb98"/>
<path d="M1383 996 C1380 1010 1376 1018 1370 1026 C1364 1034 1358 1040 1353 1046 C1356 1055 1362 1052 1368 1046 C1374 1040 1380 1030 1384 1020 C1387 1010 1388 1000 1383 996z" fill="#9fbb8e"/>
<path d="M1349 1060 C1350 1050 1352 1040 1356 1032 C1360 1024 1365 1016 1370 1008 C1374 1000 1378 993 1383 991 C1388 990 1390 998 1388 1006 C1386 1016 1384 1024 1378 1034 C1372 1044 1364 1052 1358 1057 C1355 1060 1352 1061 1349 1060z" fill="none" stroke="#3e3e40" stroke-width="4.2" stroke-linejoin="round"/>
<path d="M1383 996 C1380 1010 1376 1018 1370 1026 C1364 1034 1358 1040 1353 1046" fill="none" stroke="#3e3e40" stroke-width="4.2" stroke-linejoin="round"/>
<path d="M1292 1116 H1340 L1330 1164 q-1 4 -6 4 H1292z" fill="#ec7a58" stroke="#3e3e40" stroke-width="4.2"/>
<path d="M1290 1099 H1343 q4 0 3 5 L1343 1113 q-1 4 -5 4 H1290z" fill="#f6b48a" stroke="#3e3e40" stroke-width="4.2"/>
<text x="609.5" y="1106.5" font-size="15.8" font-weight="bold" fill="#3d3d3d" letter-spacing="1.2">LETTERING + ILLUSTRATION</text>
<text x="637" y="1125.2" font-size="15.8" font-weight="bold" fill="#3d3d3d" letter-spacing="1.2">BY @LETTERINGWORKS</text>
<text x="731" y="1208" font-family="Liberation Sans" font-style="italic" font-size="30" fill="#111" textLength="60" lengthAdjust="spacingAndGlyphs">Cactus</text>
<path d="M730 1184 H800 M730 1184 V1220 M730 1206.5 H800 M730 1220 H800" stroke="#f04747" stroke-width="1.8" fill="none"/>
<rect x="725" y="1179" width="10.5" height="10.5" fill="#fff" stroke="#f04747" stroke-width="1.8"/>
<rect x="751" y="1179" width="10.5" height="10.5" fill="#fff" stroke="#f04747" stroke-width="1.8"/>
<rect x="725" y="1215" width="10.5" height="10.5" fill="#fff" stroke="#f04747" stroke-width="1.8"/>
<rect x="751" y="1215" width="10.5" height="10.5" fill="#fff" stroke="#f04747" stroke-width="1.8"/>
<rect x="726.5" y="1204" width="7.5" height="7.5" fill="#f04747"/>
</svg>
<div class="a" style="left:2340px;top:172px;width:33px;height:1467px;background:#4d4d4d;"></div>
<div class="a" style="left:2372px;top:115px;width:2.5px;height:1524px;background:#363636;"></div>
<div class="a" style="left:2374.5px;top:115px;width:3.5px;height:1524px;background:#424242;"></div>
<div class="a" style="left:83px;top:1606px;width:2257px;height:33px;background:#474747;"></div>
<div class="a" style="left:83px;top:1606px;width:2257px;height:1.5px;background:#3a3a3a;"></div>
<svg class="a" style="left:83px;top:172px" width="2295" height="1467" viewBox="83 172 2295 1467">
<path d="M2349.5 194.3 L2356.7 187 L2363.8 194.3 M2350.6 1584.6 L2356.7 1591 L2363.7 1584.6" fill="none" stroke="#9a9a9a" stroke-width="2"/>
<rect x="2342" y="848" width="30" height="50" rx="15" fill="#666"/>
<path d="M92 1639 V1614 q0 -6 6 -6 H192 V1639z" fill="#3c3c3c"/><rect x="192" y="1608" width="1.5" height="31" fill="#555"/>
<path d="M194 1608 H222 q6 0 6 6 V1639 H194z" fill="#434343"/>
<path d="M203 1622.5 L209.5 1629 L216 1622.5" fill="none" stroke="#d8d8d8" stroke-width="2"/>
<path d="M246 1617 V1631" stroke="#6a6a6a" stroke-width="2.6"/><path d="M262 1617 L249.5 1624 L262 1631z M293 1617 L281 1624 L293 1631z" fill="#6a6a6a"/>
<path d="M312 1639 V1614 q0 -6 6 -6 H392 V1639z" fill="#3c3c3c"/><rect x="392" y="1608" width="1.5" height="31" fill="#555"/>
<path d="M394 1608 H422 q6 0 6 6 V1639 H394z" fill="#434343"/>
<path d="M403 1622.5 L409.5 1629 L416 1622.5" fill="none" stroke="#d8d8d8" stroke-width="2"/>
<path d="M448 1617 L459 1624 L448 1631z M477.5 1617 L490 1624 L477.5 1631z" fill="#6a6a6a"/><path d="M493 1617 V1631" stroke="#6a6a6a" stroke-width="2.6"/>
<rect x="511" y="1608" width="2" height="31" fill="#3c3c3c"/>
<rect x="910" y="1608" width="2" height="31" fill="#3c3c3c"/>
<rect x="1626" y="1609" width="50" height="29" rx="14.5" fill="#5a5a5a"/>
<path d="M2319 1616 L2325 1622.5 L2319 1629" fill="none" stroke="#9a9a9a" stroke-width="2"/>
</svg>
<div class="t" style="left:98px;top:1614.54px;font-size:21.6px;color:#f0f0f0;">62.51%</div>
<div class="t" style="left:319.8px;top:1614.54px;font-size:21.6px;color:#f0f0f0;">1</div>
<div class="t" style="left:668px;top:1614.71px;font-size:21.4px;color:#c8c8c8;">Selection</div>
<div class="a" style="left:2378px;top:115px;width:502px;height:1524px;background:#535353;"></div>
<div class="a" style="left:2878px;top:115px;width:2px;height:1524px;background:#3d3d3d;"></div>
<div class="a" style="left:2378px;top:115px;width:500px;height:25px;background:#434343;"></div>
<div class="a" style="left:2378px;top:140px;width:500px;height:54px;background:#434343;"></div>
<div class="a" style="left:2378px;top:193px;width:500px;height:1.5px;background:#3a3a3a;"></div>
<div class="a" style="left:2378px;top:140px;width:140px;height:55px;background:#535353;"></div>
<div class="a" style="left:2518px;top:140px;width:1.5px;height:54px;background:#3a3a3a;"></div>
<div class="a" style="left:2621px;top:140px;width:1.5px;height:54px;background:#3a3a3a;"></div>
<div class="a" style="left:2746px;top:140px;width:1.5px;height:54px;background:#3a3a3a;"></div>
<div class="t" style="left:2396.5px;top:156.18px;font-size:21.2px;color:#f2f2f2;font-weight:bold;">Properties</div>
<div class="t" style="left:2536px;top:157.03px;font-size:20.2px;color:#bdbdbd;font-weight:bold;">Layers</div>
<div class="t" style="left:2640.5px;top:156.26px;font-size:21.1px;color:#bdbdbd;font-weight:bold;">Libraries</div>
<div class="t" style="left:2398px;top:217.98px;font-size:21.2px;color:#c9c9c9;">Type</div>
<div class="t" style="left:2398px;top:281.5px;font-size:22px;color:#c9c9c9;">Transform</div>
<div class="t" style="left:2398px;top:542.57px;font-size:21.1px;color:#c9c9c9;">Appearance</div>
<div class="t" style="left:2398px;top:877.77px;font-size:21.1px;color:#c9c9c9;">Character</div>
<div class="t" style="left:2398px;top:1195.9px;font-size:20.7px;color:#c9c9c9;">Paragraph</div>
<div class="t" style="left:2398px;top:1375.97px;font-size:21.8px;color:#c9c9c9;">Quick Actions</div>
<div class="a" style="left:2378px;top:260px;width:500px;height:1.5px;background:#474747;"></div>
<div class="a" style="left:2378px;top:518px;width:500px;height:1.5px;background:#474747;"></div>
<div class="a" style="left:2378px;top:852px;width:500px;height:1.5px;background:#474747;"></div>
<div class="a" style="left:2378px;top:1171px;width:500px;height:1.5px;background:#474747;"></div>
<div class="a" style="left:2378px;top:1343px;width:500px;height:1.5px;background:#474747;"></div>
<svg class="a" style="left:2340px;top:115px" width="540" height="1524" viewBox="2340 115 540 1524">
<path d="M2852 124 l4.5 3.5 l-4.5 3.5 M2859 124 l4.5 3.5 l-4.5 3.5" fill="none" stroke="#c8c8c8" stroke-width="1.6"/>
<path d="M2407.5 355 H2413.5 M2422 355 H2428 M2407.5 369.5 H2413.5 M2422 369.5 H2428 M2407.5 384 H2413.5 M2422 384 H2428 M2403 359 V364.5 M2403 373.5 V379 M2417.5 359 V364.5 M2417.5 373.5 V379 M2432 359 V364.5 M2432 373.5 V379" stroke="#c4c4c4" stroke-width="1.6"/><rect x="2399.0" y="350.5" width="8.5" height="8.5" fill="#535353" stroke="#c4c4c4" stroke-width="1.6"/><rect x="2399.0" y="365.0" width="8.5" height="8.5" fill="#535353" stroke="#c4c4c4" stroke-width="1.6"/><rect x="2399.0" y="379.5" width="8.5" height="8.5" fill="#535353" stroke="#c4c4c4" stroke-width="1.6"/><rect x="2413.5" y="350.5" width="8.5" height="8.5" fill="#535353" stroke="#c4c4c4" stroke-width="1.6"/><rect x="2413.5" y="365.0" width="8.5" height="8.5" fill="#ffffff" stroke="#c4c4c4" stroke-width="1.6"/><rect x="2413.5" y="379.5" width="8.5" height="8.5" fill="#535353" stroke="#c4c4c4" stroke-width="1.6"/><rect x="2428.0" y="350.5" width="8.5" height="8.5" fill="#535353" stroke="#c4c4c4" stroke-width="1.6"/><rect x="2428.0" y="365.0" width="8.5" height="8.5" fill="#535353" stroke="#c4c4c4" stroke-width="1.6"/><rect x="2428.0" y="379.5" width="8.5" height="8.5" fill="#535353" stroke="#c4c4c4" stroke-width="1.6"/>
<rect x="2492.75" y="323.75" width="109.5" height="38.5" rx="5" fill="#404040" stroke="#5a5a5a" stroke-width="1.5"/><rect x="2664.75" y="323.75" width="109.5" height="38.5" rx="5" fill="#404040" stroke="#5a5a5a" stroke-width="1.5"/><rect x="2492.75" y="375.75" width="109.5" height="38.0" rx="5" fill="#404040" stroke="#5a5a5a" stroke-width="1.5"/><rect x="2664.75" y="375.75" width="109.5" height="38.0" rx="5" fill="#404040" stroke="#5a5a5a" stroke-width="1.5"/>
<rect x="2492.75" y="427.75" width="108.5" height="38.5" rx="5" fill="#404040" stroke="#5a5a5a" stroke-width="1.5"/><rect x="2565.5" y="428.5" width="1.6" height="37" fill="#5a5a5a"/><path d="M2577.5 444.75 L2584 451.25 L2590.5 444.75" fill="none" stroke="#d0d0d0" stroke-width="2.2"/>
<path d="M2810 372 V364 q0 -7 7 -7 q7 0 7 7 V366 M2810 377 V380 q0 7 7 7 q7 0 7 -7 V374" fill="none" stroke="#c4c4c4" stroke-width="2.4"/><path d="M2803 356 L2831 384" stroke="#c4c4c4" stroke-width="2.4"/>
<path d="M2457 449 H2484 M2457 449 L2478 433 M2470 440 q4 4 3 9" fill="none" stroke="#c4c4c4" stroke-width="2.2"/><circle cx="2483" cy="438" r="1.6" fill="#c4c4c4"/><circle cx="2483" cy="449" r="1.6" fill="#c4c4c4"/>
<path d="M2677 439 L2686.5 447.5 L2677 456z" fill="none" stroke="#c4c4c4" stroke-width="1.8"/><path d="M2703 439 L2693.5 447.5 L2703 456z" fill="#c4c4c4"/><path d="M2690 436 V462" stroke="#c4c4c4" stroke-width="1.6" stroke-dasharray="2 2"/>
<path d="M2739 436 H2758 L2748.5 445z" fill="#c4c4c4"/><path d="M2739 462 H2758 L2748.5 453z" fill="none" stroke="#c4c4c4" stroke-width="1.8"/><path d="M2737 449 H2760" stroke="#c4c4c4" stroke-width="1.6" stroke-dasharray="2 2"/>
<g fill="#c8c8c8"><circle cx="2825.5" cy="490" r="3.5"/><circle cx="2836" cy="490" r="3.5"/><circle cx="2846.5" cy="490" r="3.5"/></g><g fill="#c8c8c8"><circle cx="2825.5" cy="825.5" r="3.5"/><circle cx="2836" cy="825.5" r="3.5"/><circle cx="2846.5" cy="825.5" r="3.5"/></g><g fill="#c8c8c8"><circle cx="2825.5" cy="1144" r="3.5"/><circle cx="2836" cy="1144" r="3.5"/><circle cx="2846.5" cy="1144" r="3.5"/></g><g fill="#c8c8c8"><circle cx="2825.5" cy="1315" r="3.5"/><circle cx="2836" cy="1315" r="3.5"/><circle cx="2846.5" cy="1315" r="3.5"/></g>
<rect x="2398" y="587" width="36" height="35" fill="#2a2a2a"/><rect x="2399.5" y="588.5" width="33" height="32" fill="#fff"/><rect x="2401.5" y="590.5" width="29" height="28" fill="#000"/>
<rect x="2398" y="644" width="36" height="36" fill="#2a2a2a"/><rect x="2399.5" y="645.5" width="33" height="33" fill="#fff"/><rect x="2408" y="654" width="16" height="16" fill="#2a2a2a"/><rect x="2411" y="657" width="10" height="10" fill="#535353"/><path d="M2400 679 L2432 646" stroke="#f01010" stroke-width="3"/>
<rect x="2400" y="705" width="32" height="32" fill="#5a5a5a" stroke="#bdbdbd" stroke-width="2"/><rect x="2401.0" y="706.0" width="7.5" height="7.5" fill="#707070"/><rect x="2401.0" y="721.0" width="7.5" height="7.5" fill="#707070"/><rect x="2408.5" y="713.5" width="7.5" height="7.5" fill="#707070"/><rect x="2408.5" y="728.5" width="7.5" height="7.5" fill="#707070"/><rect x="2416.0" y="706.0" width="7.5" height="7.5" fill="#707070"/><rect x="2416.0" y="721.0" width="7.5" height="7.5" fill="#707070"/><rect x="2423.5" y="713.5" width="7.5" height="7.5" fill="#707070"/><rect x="2423.5" y="728.5" width="7.5" height="7.5" fill="#707070"/>
<rect x="2550.25" y="642.75" width="137.0" height="39.5" rx="5" fill="#404040" stroke="#5a5a5a" stroke-width="1.5"/><rect x="2585.5" y="643.5" width="1.6" height="38" fill="#5a5a5a"/><rect x="2651.5" y="643.5" width="1.6" height="38" fill="#5a5a5a"/><path d="M2560.5 655 L2567.5 649 L2574.5 655" fill="none" stroke="#d0d0d0" stroke-width="2"/><path d="M2560.5 669 L2567.5 675 L2574.5 669" fill="none" stroke="#d0d0d0" stroke-width="2"/><path d="M2663 657.5 L2670 664.5 L2677 657.5" fill="none" stroke="#d0d0d0" stroke-width="2.2"/>
<rect x="2550.25" y="700.75" width="137.0" height="39.5" rx="5" fill="#404040" stroke="#5a5a5a" stroke-width="1.5"/><rect x="2651.5" y="701.5" width="1.6" height="38" fill="#5a5a5a"/><path d="M2666 713 L2673 720.5 L2666 728" fill="none" stroke="#d0d0d0" stroke-width="2.2"/>
<path d="M2458 675 H2520 M2458 733 H2532" stroke="#c9c9c9" stroke-width="1.6" stroke-dasharray="2 2"/>
<text x="2411" y="789" font-family="Liberation Serif" font-style="italic" font-size="26" fill="#b8b8b8">fx</text><path d="M2433 786 h6 l-3 3z" fill="#b8b8b8"/>
<rect x="2399.75" y="920.25" width="436.5" height="39.0" rx="5" fill="#404040" stroke="#5a5a5a" stroke-width="1.5"/><rect x="2800.5" y="921.0" width="1.6" height="37.5" fill="#5a5a5a"/><path d="M2812 936.5 L2819 943.5 L2826 936.5" fill="none" stroke="#d0d0d0" stroke-width="2.2"/>
<circle cx="2416" cy="935" r="7" fill="none" stroke="#c4c4c4" stroke-width="1.8"/><path d="M2411 941 L2403 950" stroke="#c4c4c4" stroke-width="1.8"/><path d="M2426 944 h10 l-5 4.5z" fill="#c4c4c4"/>
<rect x="2399.75" y="972.75" width="436.5" height="38.5" rx="5" fill="#404040" stroke="#5a5a5a" stroke-width="1.5"/><rect x="2800.5" y="973.5" width="1.6" height="37" fill="#5a5a5a"/><path d="M2812 988.5 L2819 995.5 L2826 988.5" fill="none" stroke="#d0d0d0" stroke-width="2.2"/>
<rect x="2441.75" y="1024.75" width="160.5" height="38.5" rx="5" fill="#404040" stroke="#5a5a5a" stroke-width="1.5"/><rect x="2476.5" y="1025.5" width="1.6" height="37" fill="#5a5a5a"/><rect x="2566.5" y="1025.5" width="1.6" height="37" fill="#5a5a5a"/><path d="M2452 1036 L2459 1030 L2466 1036" fill="none" stroke="#d0d0d0" stroke-width="2"/><path d="M2452 1050 L2459 1056 L2466 1050" fill="none" stroke="#d0d0d0" stroke-width="2"/><path d="M2577.5 1040.5 L2584.5 1047.5 L2591.5 1040.5" fill="none" stroke="#d0d0d0" stroke-width="2.2"/>
<rect x="2675.75" y="1024.75" width="160.5" height="38.5" rx="5" fill="#404040" stroke="#5a5a5a" stroke-width="1.5"/><rect x="2710.5" y="1025.5" width="1.6" height="37" fill="#5a5a5a"/><rect x="2800.5" y="1025.5" width="1.6" height="37" fill="#5a5a5a"/><path d="M2686 1036 L2693 1030 L2700 1036" fill="none" stroke="#d0d0d0" stroke-width="2"/><path d="M2686 1050 L2693 1056 L2700 1050" fill="none" stroke="#d0d0d0" stroke-width="2"/><path d="M2811.5 1040.5 L2818.5 1047.5 L2825.5 1040.5" fill="none" stroke="#d0d0d0" stroke-width="2.2"/>
<rect x="2441.75" y="1076.75" width="160.5" height="38.5" rx="5" fill="#404040" stroke="#5a5a5a" stroke-width="1.5"/><rect x="2476.5" y="1077.5" width="1.6" height="37" fill="#5a5a5a"/><rect x="2566.5" y="1077.5" width="1.6" height="37" fill="#5a5a5a"/><path d="M2452 1088 L2459 1082 L2466 1088" fill="none" stroke="#d0d0d0" stroke-width="2"/><path d="M2452 1102 L2459 1108 L2466 1102" fill="none" stroke="#d0d0d0" stroke-width="2"/><path d="M2577.5 1092.5 L2584.5 1099.5 L2591.5 1092.5" fill="none" stroke="#d0d0d0" stroke-width="2.2"/>
<rect x="2675.75" y="1076.75" width="160.5" height="38.5" rx="5" fill="#404040" stroke="#5a5a5a" stroke-width="1.5"/><rect x="2710.5" y="1077.5" width="1.6" height="37" fill="#5a5a5a"/><rect x="2800.5" y="1077.5" width="1.6" height="37" fill="#5a5a5a"/><path d="M2686 1088 L2693 1082 L2700 1088" fill="none" stroke="#d0d0d0" stroke-width="2"/><path d="M2686 1102 L2693 1108 L2700 1102" fill="none" stroke="#d0d0d0" stroke-width="2"/><path d="M2811.5 1092.5 L2818.5 1099.5 L2825.5 1092.5" fill="none" stroke="#d0d0d0" stroke-width="2.2"/>
<text x="2397" y="1056" font-family="Liberation Serif" font-weight="bold" font-size="22" fill="#c4c4c4">T</text><text x="2408" y="1057" font-family="Liberation Serif" font-weight="bold" font-size="38" fill="#c4c4c4">T</text>
<text x="2647" y="1038" font-family="Liberation Sans" font-size="17" fill="none" stroke="#c4c4c4" stroke-width="1.2">A</text><text x="2645" y="1057" font-family="Liberation Sans" font-size="17" fill="none" stroke="#c4c4c4" stroke-width="1.2">A</text><path d="M2646 1039 H2666 M2644 1058 H2666" stroke="#c4c4c4" stroke-width="2"/><path d="M2638 1040 V1056" stroke="#c4c4c4" stroke-width="2.2"/><path d="M2634 1043 L2638 1038 L2642 1043z M2634 1053 L2638 1058 L2642 1053z" fill="#c4c4c4"/>
<text x="2397" y="1100" font-family="Liberation Sans" font-size="24" fill="#c4c4c4">V/A</text><path d="M2417 1108 H2432 M2422 1104 L2417 1108 L2422 1112" fill="none" stroke="#c4c4c4" stroke-width="2"/>
<rect x="2632" y="1078" width="36" height="21" fill="#c4c4c4"/><text x="2634" y="1097" font-family="Liberation Sans" font-weight="bold" font-size="21" fill="#535353">VA</text><path d="M2633 1107 H2667 M2637 1103 L2633 1107 L2637 1111 M2663 1103 L2667 1107 L2663 1111" fill="none" stroke="#c4c4c4" stroke-width="2"/>
<rect x="2400" y="1239" width="48" height="47.5" rx="4" fill="#303030"/>
<rect x="2409" y="1249" width="24" height="2.2" fill="#ffffff"/><rect x="2409" y="1255" width="30" height="2.2" fill="#ffffff"/><rect x="2409" y="1261" width="24" height="2.2" fill="#ffffff"/><rect x="2409" y="1267" width="30" height="2.2" fill="#ffffff"/><rect x="2409" y="1273" width="24" height="2.2" fill="#ffffff"/>
<rect x="2474.0" y="1249" width="24" height="2.2" fill="#c4c4c4"/><rect x="2471.0" y="1255" width="30" height="2.2" fill="#c4c4c4"/><rect x="2474.0" y="1261" width="24" height="2.2" fill="#c4c4c4"/><rect x="2471.0" y="1267" width="30" height="2.2" fill="#c4c4c4"/><rect x="2474.0" y="1273" width="24" height="2.2" fill="#c4c4c4"/>
<rect x="2538" y="1249" width="24" height="2.2" fill="#c4c4c4"/><rect x="2532" y="1255" width="30" height="2.2" fill="#c4c4c4"/><rect x="2538" y="1261" width="24" height="2.2" fill="#c4c4c4"/><rect x="2532" y="1267" width="30" height="2.2" fill="#c4c4c4"/><rect x="2538" y="1273" width="24" height="2.2" fill="#c4c4c4"/>
<rect x="2596" y="1249" width="28" height="2.2" fill="#c4c4c4"/><rect x="2596" y="1255" width="28" height="2.2" fill="#c4c4c4"/><rect x="2596" y="1261" width="28" height="2.2" fill="#c4c4c4"/><rect x="2596" y="1267" width="28" height="2.2" fill="#c4c4c4"/><rect x="2596" y="1273" width="20" height="2.2" fill="#c4c4c4"/>
<rect x="2658.0" y="1249" width="28" height="2.2" fill="#c4c4c4"/><rect x="2658.0" y="1255" width="28" height="2.2" fill="#c4c4c4"/><rect x="2658.0" y="1261" width="28" height="2.2" fill="#c4c4c4"/><rect x="2658.0" y="1267" width="28" height="2.2" fill="#c4c4c4"/><rect x="2662.0" y="1273" width="20" height="2.2" fill="#c4c4c4"/>
<rect x="2720" y="1249" width="28" height="2.2" fill="#c4c4c4"/><rect x="2720" y="1255" width="28" height="2.2" fill="#c4c4c4"/><rect x="2720" y="1261" width="28" height="2.2" fill="#c4c4c4"/><rect x="2720" y="1267" width="28" height="2.2" fill="#c4c4c4"/><rect x="2728" y="1273" width="20" height="2.2" fill="#c4c4c4"/>
<rect x="2782" y="1249" width="28" height="2.2" fill="#c4c4c4"/><rect x="2782" y="1255" width="28" height="2.2" fill="#c4c4c4"/><rect x="2782" y="1261" width="28" height="2.2" fill="#c4c4c4"/><rect x="2782" y="1267" width="28" height="2.2" fill="#c4c4c4"/><rect x="2782" y="1273" width="28" height="2.2" fill="#c4c4c4"/>
<rect x="2399" y="1420" width="199" height="39" rx="4" fill="none" stroke="#7b7b7b" stroke-width="2"/>
<rect x="2619" y="1420" width="199" height="39" rx="4" fill="none" stroke="#7b7b7b" stroke-width="2"/>
</svg>
<div class="t" style="left:2466px;top:331.3px;font-size:22px;color:#c9c9c9;">X:</div>
<div class="t" style="left:2633px;top:331.3px;font-size:22px;color:#c9c9c9;">W:</div>
<div class="t" style="left:2466px;top:383.9px;font-size:22px;color:#c9c9c9;">Y:</div>
<div class="t" style="left:2636px;top:383.9px;font-size:22px;color:#c9c9c9;">H:</div>
<div class="t" style="left:2503px;top:330.79px;font-size:22.6px;color:#f0f0f0;">3.358 in</div>
<div class="t" style="left:2674.5px;top:330.79px;font-size:22.6px;color:#f0f0f0;">0.327 in</div>
<div class="t" style="left:2503px;top:383.39px;font-size:22.6px;color:#f0f0f0;">5.54 in</div>
<div class="t" style="left:2674.5px;top:383.39px;font-size:22.6px;color:#f0f0f0;">0.227 in</div>
<div class="t" style="left:2498px;top:434.59px;font-size:22.6px;color:#f0f0f0;">0°</div>
<div class="t" style="left:2458px;top:595.56px;font-size:20.4px;color:#c9c9c9;">Fill</div>
<div class="t" style="left:2458px;top:651.81px;font-size:21.4px;color:#d4d4d4;">Stroke</div>
<div class="t" style="left:2458px;top:709.77px;font-size:21.8px;color:#d4d4d4;">Opacity</div>
<div class="t" style="left:2559px;top:709.17px;font-size:22.5px;color:#f0f0f0;">100%</div>
<div class="t" style="left:2452.4px;top:929.3px;font-size:22px;color:#f0f0f0;">Noteworthy</div>
<div class="t" style="left:2412.6px;top:981.8px;font-size:22px;color:#f0f0f0;">Light</div>
<div class="t" style="left:2485.7px;top:1032.58px;font-size:22.5px;color:#f0f0f0;">12 pt</div>
<div class="t" style="left:2718.6px;top:1032.4px;font-size:22.7px;color:#f0f0f0;">(14.4 pt</div>
<div class="t" style="left:2484px;top:1084.46px;font-size:22.4px;color:#f0f0f0;">Auto</div>
<div class="t" style="left:2718.6px;top:1084.46px;font-size:22.4px;color:#f0f0f0;">0</div>
<div class="t" style="left:2423px;top:1428.81px;font-size:21.4px;color:#ececec;">Create Outlines</div>
<div class="t" style="left:2679.2px;top:1428.81px;font-size:21.4px;color:#ececec;">Arrange</div>
<div class="a" style="left:0px;top:1637.5px;width:2880px;height:2px;background:#313131;"></div>
<svg class="a" style="left:0;top:1639px" width="2880" height="161" viewBox="0 1639 2880 161">
<defs>
<linearGradient id="fnd" x1="0" y1="0" x2="0" y2="1"><stop offset="0" stop-color="#16d0fb"/><stop offset="1" stop-color="#1a6ff0"/></linearGradient>
<linearGradient id="fnd2" x1="0" y1="0" x2="0" y2="1"><stop offset="0" stop-color="#f3f3f5"/><stop offset="1" stop-color="#d9e6f5"/></linearGradient>
<linearGradient id="lp" x1="0" y1="0" x2="0" y2="1"><stop offset="0" stop-color="#d5e0e6"/><stop offset="1" stop-color="#8a8a8a"/></linearGradient>
<linearGradient id="as" x1="0" y1="0" x2="0" y2="1"><stop offset="0" stop-color="#13c2fb"/><stop offset="1" stop-color="#1762e3"/></linearGradient>
<linearGradient id="sp" x1="0" y1="0" x2="0" y2="1"><stop offset="0" stop-color="#d8e0e4"/><stop offset="1" stop-color="#8c8c8c"/></linearGradient>
<linearGradient id="wa" x1="0" y1="0" x2="0" y2="1"><stop offset="0" stop-color="#5fd46a"/><stop offset="1" stop-color="#25b33a"/></linearGradient>
<linearGradient id="acr" x1="0" y1="0" x2="0" y2="1"><stop offset="0" stop-color="#f5131a"/><stop offset="1" stop-color="#8c0408"/></linearGradient>
<linearGradient id="qt" x1="0" y1="0" x2="0" y2="1"><stop offset="0" stop-color="#1450dd"/><stop offset="1" stop-color="#02d4f6"/></linearGradient>
<linearGradient id="qtr" x1="0" y1="0" x2="0" y2="1"><stop offset="0" stop-color="#7d8590"/><stop offset="1" stop-color="#2c2e31"/></linearGradient>
<linearGradient id="cc" x1="0" y1="0" x2="0" y2="1"><stop offset="0" stop-color="#f5261a"/><stop offset="1" stop-color="#c11d10"/></linearGradient>
<linearGradient id="fold" x1="0" y1="0" x2="0" y2="1"><stop offset="0" stop-color="#7fd3fb"/><stop offset="1" stop-color="#4bb8ee"/></linearGradient>
<linearGradient id="trash" x1="0" y1="0" x2="0" y2="1"><stop offset="0" stop-color="#f0f0f0"/><stop offset="1" stop-color="#d4d4d4"/></linearGradient>
</defs>
<path d="M282 1800 V1652 q0 -12 12 -12 H2586 q12 0 12 12 V1800z" fill="#4a586a"/>
<rect x="306" y="1667" width="104" height="97" rx="7" fill="url(#fnd2)"/>
<path d="M313 1667 H360 q-12 30 -14 60 H366 q0 18 6 37 H313 q-7 0 -7 -7 V1674 q0 -7 7 -7z" fill="url(#fnd)"/>
<path d="M335 1700 V1708 M381 1700 V1708" stroke="#1d1d1f" stroke-width="3.2" stroke-linecap="round"/><path d="M327 1730 q31 22 62 0" fill="none" stroke="#1d1d1f" stroke-width="3"/>
<circle cx="494" cy="1715.5" r="56" fill="#dfe8ec"/><circle cx="494" cy="1715.5" r="51" fill="url(#lp)"/>
<path d="M526.6 1682.8 C528 1695 518 1712 507 1726 L499 1726 C497 1738 493 1748 489 1755 C488 1745 490 1738 487 1735 L482 1737 L472 1729 L475 1721 C468 1719 460 1719 454 1721 C460 1714 466 1710 482 1708 C490 1698 508 1686 526.6 1682.8z M461 1749 C462 1742 466 1736 470 1734 L476 1739 C474 1744 468 1748 461 1749z" fill="#444649"/><circle cx="505.5" cy="1703.8" r="6.8" fill="#a9b2b6"/>
<circle cx="629.6" cy="1715.5" r="58" fill="#12a05c"/>
<path d="M604.7 1721.8 L581 1684.6 A58 58 0 0 1 681.6 1689 L629.6 1689z" fill="#de4b3f"/>
<path d="M629.6 1689 L681.6 1689 A58 58 0 0 1 627 1773.5 L649 1734z" fill="#fecd44"/>
<circle cx="629.6" cy="1715.5" r="26.5" fill="#f1f1f1"/><circle cx="629.6" cy="1715.5" r="21" fill="#4a8af3"/>
<g transform="rotate(-6 767 1715)"><rect x="722" y="1662" width="90" height="106" fill="#f6f6f6" stroke="#c8a640" stroke-width="1"/><rect x="722" y="1662" width="90" height="23" fill="#f8cf45"/><path d="M724 1694.0 H810" stroke="#c8c8c8" stroke-width="1"/><path d="M724 1702.5 H810" stroke="#c8c8c8" stroke-width="1"/><path d="M724 1711.0 H810" stroke="#c8c8c8" stroke-width="1"/><path d="M724 1719.5 H810" stroke="#c8c8c8" stroke-width="1"/><path d="M724 1728.0 H810" stroke="#c8c8c8" stroke-width="1"/><path d="M724 1736.5 H810" stroke="#c8c8c8" stroke-width="1"/><path d="M724 1745.0 H810" stroke="#c8c8c8" stroke-width="1"/><path d="M724 1753.5 H810" stroke="#c8c8c8" stroke-width="1"/><path d="M724 1762.0 H810" stroke="#c8c8c8" stroke-width="1"/></g>
<circle cx="902" cy="1715" r="56" fill="url(#as)"/>
<path d="M893 1684 L914 1724 M910 1684 L886 1727 M875 1727 H933 M880 1740 L886 1731 M922 1729 L930 1740" stroke="#fff" stroke-width="8.5" stroke-linecap="round"/>
<circle cx="945" cy="1677" r="24" fill="#ea3b32"/><text x="945" y="1688" font-family="Liberation Sans" font-size="30" fill="#fff" text-anchor="middle">4</text>
<rect x="983" y="1665" width="111" height="102" rx="6" fill="url(#sp)"/>
<circle cx="1037.5" cy="1716.4" r="45" fill="#2a2a2a" stroke="#8fb0d0" stroke-width="0.8"/>
<circle cx="1037.5" cy="1716.4" r="37" fill="none" stroke="#b8b6b0" stroke-width="8" stroke-dasharray="4.2 4.1"/>
<circle cx="1037.5" cy="1716.4" r="31" fill="#b8b6b0"/><circle cx="1037.5" cy="1716.4" r="26" fill="#3e3e3e"/>
<path d="M1037.5 1716.4 L1024 1693 M1037.5 1716.4 L1064 1716.4 M1037.5 1716.4 L1024 1740" stroke="#b8b6b0" stroke-width="8.5"/><circle cx="1037.5" cy="1716.4" r="3.5" fill="#d8d8d8"/>
<circle cx="1081" cy="1677" r="24" fill="#ea3b32"/><text x="1081" y="1688" font-family="Liberation Sans" font-size="30" fill="#fff" text-anchor="middle">1</text>
<rect x="1138" y="1660" width="2.5" height="120" fill="#1b2536"/><rect x="2013" y="1660" width="2.5" height="120" fill="#1b2536"/>
<circle cx="1236" cy="1714" r="56" fill="#f2f2f2"/><path d="M1193 1772 L1203 1738 L1226 1762z" fill="#f2f2f2"/><circle cx="1236" cy="1714" r="46" fill="url(#wa)"/><path d="M1205 1760 L1210 1738 L1226 1752z" fill="#27b43b"/>
<path d="M1214 1696 q6 -8 10 -4 l6 10 q2 4 -4 8 q6 14 18 20 q4 -6 8 -4 l10 6 q4 4 -4 10 q-14 10 -36 -12 q-18 -22 -8 -34z" fill="#fff"/>
<rect x="1317" y="1668" width="110" height="96" rx="5" fill="#1e1e1e" stroke="#9a9a9a" stroke-width="2"/><rect x="1323" y="1674" width="98" height="84" fill="#2b2b2b"/>
<path d="M1331 1684 L1345 1690 L1331 1696" fill="none" stroke="#fff" stroke-width="3.5"/><path d="M1347 1701 H1362" stroke="#fff" stroke-width="3.5"/>
<rect x="1448" y="1654" width="120" height="117" fill="url(#acr)"/>
<path d="M1500 1674 q6 -6 8 4 q4 30 -20 66 q-10 16 -16 10 q-4 -10 18 -20 q30 -12 44 -6 q10 6 -4 12 q-12 2 -30 -24 q-8 -16 0 -42z" fill="none" stroke="#fff" stroke-width="3.4"/>
<circle cx="1644" cy="1715" r="56" fill="url(#qtr)"/><circle cx="1644" cy="1711" r="36" fill="url(#qt)"/>
<path d="M1634 1706 q6 -8 14 -2 l48 46 q2 20 -12 18 l-48 -46 q-6 -8 -2 -16z" fill="#3a3d42"/>
<rect x="1720" y="1654" width="120" height="117" rx="26" fill="url(#cc)"/>
<g fill="#fff"><circle cx="1757" cy="1717" r="24.5"/><circle cx="1796" cy="1706" r="31"/><rect x="1757" y="1708" width="40" height="33.5"/></g>
<g fill="#d3200f"><circle cx="1757" cy="1717" r="21.5"/><circle cx="1796" cy="1706" r="28"/><rect x="1757" y="1708" width="40" height="30.5"/></g>
<g fill="#fff"><circle cx="1759" cy="1717" r="17"/><circle cx="1796" cy="1707" r="23.5"/><rect x="1759" y="1712" width="36" height="22"/></g>
<g fill="#d3200f"><circle cx="1759" cy="1717" r="12.5"/><circle cx="1796" cy="1707" r="19"/><rect x="1759" y="1716" width="36" height="13.5"/></g>
<path d="M1762 1704 L1788 1729" stroke="#d3200f" stroke-width="9"/><path d="M1765 1707 L1786 1728" stroke="#fff" stroke-width="4.5"/><path d="M1770 1696 L1783 1708" stroke="#fff" stroke-width="4.5"/>
<rect x="1856" y="1654" width="120" height="117" fill="#ff9a00"/><rect x="1861" y="1659" width="110" height="107" fill="#2e1700"/>
<text x="1916" y="1737" font-family="Liberation Sans" font-weight="bold" font-size="64" fill="#ff9a00" text-anchor="middle">Ai</text>
<g transform="rotate(4 2106 1675)"><rect x="2075" y="1650" width="64" height="54" fill="#f6f6f6" stroke="#c8c8c8"/><path d="M2075 1656 H2139" stroke="#dde4ee" stroke-width="0.8"/><path d="M2075 1662 H2139" stroke="#dde4ee" stroke-width="0.8"/><path d="M2075 1668 H2139" stroke="#dde4ee" stroke-width="0.8"/><path d="M2075 1674 H2139" stroke="#dde4ee" stroke-width="0.8"/><path d="M2075 1680 H2139" stroke="#dde4ee" stroke-width="0.8"/><path d="M2075 1686 H2139" stroke="#dde4ee" stroke-width="0.8"/><path d="M2075 1692 H2139" stroke="#dde4ee" stroke-width="0.8"/><path d="M2075 1698 H2139" stroke="#dde4ee" stroke-width="0.8"/><path d="M2112 1651 V1704" stroke="#555" stroke-width="5" stroke-dasharray="2.5 2"/><rect x="2108" y="1688" width="8" height="12" rx="2" fill="#777"/></g>
<path d="M2060 1694 q0 -6 6 -6 H2100 q4 0 6 4 l3 4 H2163 q5 0 5 5 V1758 q0 6 -6 6 H2066 q-6 0 -6 -6z" fill="url(#fold)"/><path d="M2060 1703 H2168" stroke="#8fdcfd" stroke-width="1.5"/><rect x="2060" y="1754" width="108" height="3" fill="#4fb5ea"/>
<rect x="2190" y="1683" width="120" height="67" fill="#000"/>
<circle cx="2288" cy="1754" r="20" fill="url(#qtr)"/><circle cx="2288" cy="1752" r="13" fill="url(#qt)"/><path d="M2284 1750 l20 18 l-4 4 l-18 -18z" fill="#3a3d42"/>
<rect x="2326" y="1682" width="120" height="68" fill="#fbfbfb" stroke="#dcdcdc"/><rect x="2326" y="1682" width="120" height="4" fill="#eee"/>
<g fill="#ececec"><rect x="2329" y="1690" width="18" height="56"/></g><g fill="#bbb"><rect x="2331" y="1694" width="12" height="1.5"/><rect x="2331" y="1699" width="12" height="1.5"/><rect x="2331" y="1704" width="12" height="1.5"/><rect x="2331" y="1709" width="12" height="1.5"/><rect x="2331" y="1714" width="12" height="1.5"/><rect x="2331" y="1719" width="12" height="1.5"/><rect x="2331" y="1724" width="12" height="1.5"/><rect x="2331" y="1729" width="12" height="1.5"/><rect x="2331" y="1734" width="12" height="1.5"/></g>
<g fill="#f3f3f3" stroke="#e2e2e2" stroke-width="0.6"><rect x="2352" y="1693" width="29" height="17"/><rect x="2385" y="1693" width="29" height="17"/><rect x="2352" y="1716" width="29" height="15"/><rect x="2385" y="1716" width="29" height="15"/><rect x="2418" y="1716" width="26" height="15"/><rect x="2352" y="1735" width="29" height="13"/></g>
<g fill="#31a8ff"><rect x="2354" y="1695" width="4" height="4"/></g><g fill="#ff9a00"><rect x="2387" y="1695" width="4" height="4"/></g><g fill="#b33"><rect x="2354" y="1718" width="4" height="4"/><rect x="2387" y="1718" width="4" height="4"/><rect x="2420" y="1718" width="4" height="4"/></g>
<rect x="2402" y="1731" width="44" height="44" rx="9" fill="url(#cc)"/>
<g fill="none" stroke="#fff" stroke-width="2"><circle cx="2416" cy="1755" r="7.5"/><circle cx="2429" cy="1751" r="9.5"/></g><path d="M2414 1750 L2424 1759" stroke="#d3200f" stroke-width="3"/><path d="M2415 1751 L2423 1759" stroke="#fff" stroke-width="1.5"/>
<path d="M2486 1664 q6 -12 18 -8 q6 -8 16 -2 q10 -8 20 2 q12 -4 16 8 q2 6 -2 10 H2488 q-4 -4 -2 -10z" fill="#e9e9e9" stroke="#bdbdbd" stroke-width="1"/>
<path d="M2502 1672 l8 -12 l8 10z" fill="#3f8fe0"/><path d="M2522 1670 l10 -10 l6 12z" fill="#e07030"/><path d="M2506 1668 l6 6 l-10 2z" fill="#50b060"/><path d="M2530 1664 l8 2 l-2 8z" fill="#9a5ad0"/>
<path d="M2475.5 1670 L2490 1768 q2 6 10 6 H2543 q8 0 10 -6 L2567.5 1670z" fill="url(#trash)" opacity="0.93"/>
<ellipse cx="2521.5" cy="1670" rx="46" ry="9.5" fill="none" stroke="#f4f4f4" stroke-width="2.5"/>
<path d="M2490 1690 q30 10 70 -4" stroke="#ffffff" stroke-width="3" fill="none" opacity="0.6"/>
<g fill="#0a0a0a"><circle cx="358" cy="1792" r="3.6"/><circle cx="629.6" cy="1792" r="3.6"/><circle cx="1235.6" cy="1792" r="3.6"/><circle cx="1371" cy="1792" r="3.6"/><circle cx="1508" cy="1792" r="3.6"/><circle cx="1644" cy="1792" r="3.6"/><circle cx="1780" cy="1792" r="3.6"/><circle cx="1916" cy="1792" r="3.6"/></g>
</svg>
<div class="a" style="left:766px;top:846px;width:532px;height:782px;border-radius:12px;background:linear-gradient(180deg,#eae6e3 0%,#ebe9e8 40%,#ececec 100%);box-shadow:0 4px 22px rgba(0,0,0,.26),0 0 0 1px rgba(0,0,0,.10);overflow:hidden">
<div class="a" style="left:0;top:0;width:532px;height:300px;background:radial-gradient(ellipse 260px 200px at 180px 90px,rgba(230,205,190,.45),rgba(230,205,190,0))"></div>
<div class="t" style="left:43px;top:11.69px;font-size:28.6px;color:#262626;">Undo Type</div>
<div class="t" style="left:43px;top:49.19px;font-size:28.6px;color:#a8a5a3;">Redo</div>
<div class="a" style="left:0px;top:94px;width:532px;height:3.6px;background:#d6d4d2;"></div>
<div class="t" style="left:43px;top:111.69px;font-size:28.6px;color:#262626;">Font</div>
<div class="a" style="left:490px;top:117px;width:0;height:0;border-top:10px solid transparent;border-bottom:10px solid transparent;border-left:18px solid #333"></div>
<div class="t" style="left:43px;top:149.19px;font-size:28.6px;color:#262626;">Recent Fonts</div>
<div class="a" style="left:490px;top:154.5px;width:0;height:0;border-top:10px solid transparent;border-bottom:10px solid transparent;border-left:18px solid #333"></div>
<div class="t" style="left:43px;top:186.69px;font-size:28.6px;color:#262626;">Size</div>
<div class="a" style="left:490px;top:192px;width:0;height:0;border-top:10px solid transparent;border-bottom:10px solid transparent;border-left:18px solid #333"></div>
<div class="a" style="left:0px;top:232.6px;width:532px;height:3.6px;background:#d6d4d2;"></div>
<div class="a" style="left:0px;top:246px;width:532px;height:37.5px;background:#3589ee;"></div>
<div class="t" style="left:43px;top:249.49px;font-size:28.6px;color:#ffffff;">Create Outlines</div>
<div class="a" style="left:0px;top:294px;width:532px;height:3.6px;background:#d6d4d2;"></div>
<div class="t" style="left:43px;top:310.69px;font-size:28.6px;color:#262626;">Spelling</div>
<div class="a" style="left:490px;top:316px;width:0;height:0;border-top:10px solid transparent;border-bottom:10px solid transparent;border-left:18px solid #333"></div>
<div class="a" style="left:0px;top:356.5px;width:532px;height:3.6px;background:#d6d4d2;"></div>
<div class="t" style="left:43px;top:373.29px;font-size:28.6px;color:#262626;">Insert Special Character</div>
<div class="a" style="left:490px;top:378.5999999999999px;width:0;height:0;border-top:10px solid transparent;border-bottom:10px solid transparent;border-left:18px solid #333"></div>
<div class="t" style="left:43px;top:411.19px;font-size:28.6px;color:#262626;">Insert WhiteSpace Character</div>
<div class="a" style="left:490px;top:416.5px;width:0;height:0;border-top:10px solid transparent;border-bottom:10px solid transparent;border-left:18px solid #333"></div>
<div class="t" style="left:43px;top:448.69px;font-size:28.6px;color:#262626;">Insert Break Character</div>
<div class="a" style="left:490px;top:454px;width:0;height:0;border-top:10px solid transparent;border-bottom:10px solid transparent;border-left:18px solid #333"></div>
<div class="t" style="left:43px;top:486.69px;font-size:28.6px;color:#262626;">Fill With PlaceHolder Text</div>
<div class="a" style="left:0px;top:532.5px;width:532px;height:3.6px;background:#d6d4d2;"></div>
<div class="t" style="left:43px;top:549.39px;font-size:28.6px;color:#262626;">Transform</div>
<div class="a" style="left:490px;top:554.7px;width:0;height:0;border-top:10px solid transparent;border-bottom:10px solid transparent;border-left:18px solid #333"></div>
<div class="t" style="left:43px;top:587.19px;font-size:28.6px;color:#262626;">Arrange</div>
<div class="a" style="left:490px;top:592.5px;width:0;height:0;border-top:10px solid transparent;border-bottom:10px solid transparent;border-left:18px solid #333"></div>
<div class="t" style="left:43px;top:624.69px;font-size:28.6px;color:#262626;">Select</div>
<div class="a" style="left:490px;top:630px;width:0;height:0;border-top:10px solid transparent;border-bottom:10px solid transparent;border-left:18px solid #333"></div>
<div class="t" style="left:43px;top:662.69px;font-size:28.6px;color:#262626;">Add to Library</div>
<div class="t" style="left:43px;top:700.69px;font-size:28.6px;color:#262626;">Collect For Export</div>
<div class="a" style="left:490px;top:706px;width:0;height:0;border-top:10px solid transparent;border-bottom:10px solid transparent;border-left:18px solid #333"></div>
<div class="t" style="left:43px;top:738.69px;font-size:28.6px;color:#262626;">Export Selection...</div>
</div>
</body></html>
